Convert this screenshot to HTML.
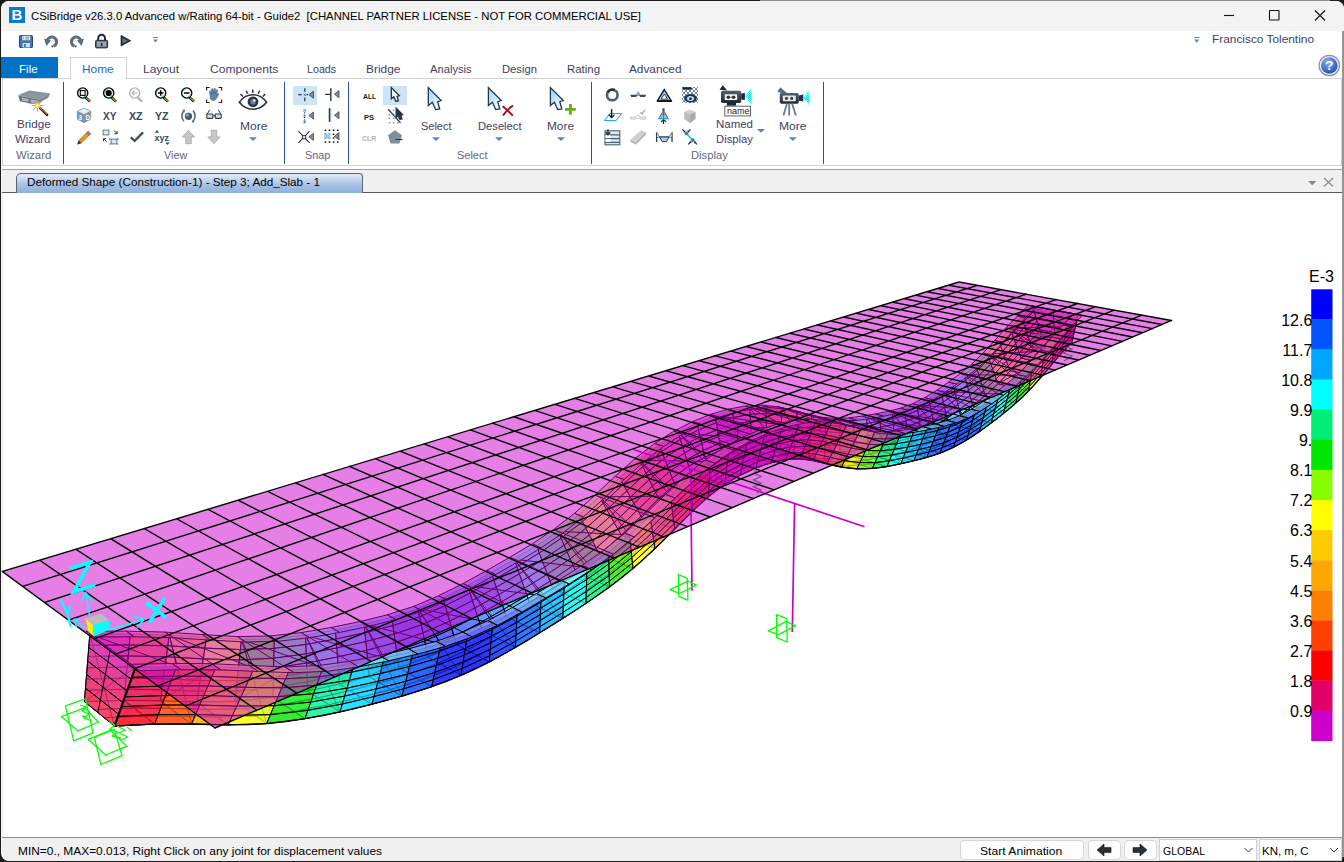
<!DOCTYPE html>
<html><head><meta charset="utf-8"><title>CSiBridge</title><style>
html,body{margin:0;padding:0;width:1344px;height:862px;overflow:hidden;background:#fff;font-family:"Liberation Sans", sans-serif;}
.t{position:absolute;white-space:pre;line-height:1;transform-origin:0 0;font-family:"Liberation Sans", sans-serif;}
.a{position:absolute;}
</style></head>
<body>
<div class="a" style="left:0px;top:0px;width:1344px;height:862px;background:#1b1b1b;"></div>
<div class="a" style="left:760px;top:0px;width:570px;height:1px;background:#8e8e8e;"></div>
<div class="a" style="left:1.4px;top:1px;width:1342.6px;height:860px;background:#fff;border-radius:8px;overflow:hidden;"></div>
<div class="a" style="left:1.4px;top:1px;width:1342.6px;height:30px;background:#f3f3f3;border-radius:8px 8px 0 0;"></div>
<div class="a" style="left:1342px;top:31px;width:2px;height:826px;background:#959595;"></div>
<div class="a" style="left:9px;top:7px;width:16px;height:16px;background:#0b78d4;color:#fff;font:bold 15px/16px 'Liberation Sans',sans-serif;text-align:center;">B</div>
<svg class="a" style="left:1210px;top:1px" width="130" height="30" viewBox="0 0 130 30"><g stroke="#111" stroke-width="1.1" fill="none"><path d="M14 14.5h10"/><rect x="59.5" y="9.5" width="9.5" height="9.5" rx="0.4"/><path d="M105 9.5l10 10M115 9.5l-10 10"/></g></svg>
<div class="a" style="left:1.4px;top:57.4px;width:56.6px;height:20.6px;background:#0072c6;"></div>
<div class="a" style="left:1.8px;top:78px;width:1340.4px;height:88px;background:#fff;box-sizing:border-box;border:1px solid #d2d2d2;"></div>
<div class="a" style="left:70px;top:57px;width:57px;height:22px;background:#fff;box-sizing:border-box;border:1px solid #cfcfcf;border-bottom:none;"></div>
<div class="a" style="left:63px;top:82px;width:1.4px;height:82px;background:#2c4f9e;"></div>
<div class="a" style="left:283.6px;top:82px;width:1.4px;height:82px;background:#2c4f9e;"></div>
<div class="a" style="left:348.1px;top:82px;width:1.4px;height:82px;background:#2c4f9e;"></div>
<div class="a" style="left:590.6px;top:82px;width:1.4px;height:82px;background:#2c4f9e;"></div>
<div class="a" style="left:823.1px;top:82px;width:1.4px;height:82px;background:#2c4f9e;"></div>
<div class="a" style="left:293.4px;top:85.6px;width:23.8px;height:19.8px;background:#cce4f7;"></div>
<div class="a" style="left:383.3px;top:85.6px;width:24px;height:19.8px;background:#cce4f7;"></div>
<div class="a" style="left:2px;top:169px;width:1340px;height:1px;background:#a0a0a0;"></div>
<div class="a" style="left:2px;top:170px;width:1340px;height:22px;background:#f0f0f0;"></div>
<div class="a" style="left:2px;top:192px;width:1340px;height:1px;background:#5a5a5a;"></div>
<div class="a" style="left:16px;top:173px;width:347px;height:20px;box-sizing:border-box;border:1px solid #5c6470;border-bottom:none;border-radius:5px 4px 0 0;background:linear-gradient(#e4edf8 0%,#c2d5ee 30%,#a4c0e4 60%,#8fb1dc 100%);"></div>
<svg class="a" style="left:1300px;top:172px" width="40" height="20" viewBox="0 0 40 20"><path d="M8 9h8.4l-4.2 4.2z" fill="#8a8a8a"/><path d="M24 6l9 8.5M33 6l-9 8.5" stroke="#8a8a8a" stroke-width="1.2" fill="none"/></svg>
<div class="a" style="left:2px;top:193px;width:1px;height:644px;background:#e8e8e8;"></div>
<div class="a" style="left:2px;top:837px;width:1340px;height:1px;background:#8c8c8c;"></div>
<div class="a" style="left:2px;top:838px;width:1340px;height:23px;background:#f0f0f0;border-radius:0 0 8px 8px;"></div>
<div class="a" style="left:959.5px;top:840px;width:124.5px;height:20px;background:#fdfdfd;box-sizing:border-box;border:1px solid #d6d6d6;border-radius:4px;"></div>
<div class="a" style="left:1087.5px;top:840px;width:33.5px;height:20px;background:#fdfdfd;box-sizing:border-box;border:1px solid #d6d6d6;border-radius:4px;"></div>
<div class="a" style="left:1123.5px;top:840px;width:33.5px;height:20px;background:#fdfdfd;box-sizing:border-box;border:1px solid #d6d6d6;border-radius:4px;"></div>
<div class="a" style="left:1158.5px;top:839px;width:98.5px;height:22px;background:#fff;box-sizing:border-box;border:1px solid #d0d0d0;"></div>
<div class="a" style="left:1258.5px;top:839px;width:83px;height:22px;background:#fff;box-sizing:border-box;border:1px solid #d0d0d0;"></div>
<svg class="a" style="left:1087px;top:840px" width="260" height="20" viewBox="0 0 260 20"><path d="M10 10l7-6v3.6h7v4.8h-7v3.6z" fill="#2a3038" stroke="#111" stroke-width=".6"/><path d="M60 10l-7-6v3.6h-7v4.8h7v3.6z" fill="#2a3038" stroke="#111" stroke-width=".6"/><path d="M157.5 8l4 4 4-4M243 8l4 4 4-4" stroke="#444" stroke-width="1" fill="none"/></svg>
<svg class="a" style="left:0;top:193px" width="1344" height="644" viewBox="0 193 1344 644">
<g stroke="#000" stroke-width="1.0" stroke-linejoin="round" fill-opacity="0.74">
<path d="M89.8 634.0L130.3 633.9L129.3 645.0L88.9 645.3Z" fill="#e82e80"/><path d="M88.9 645.3L129.3 645.0L128.3 656.0L88.0 656.5Z" fill="#e82e7f"/><path d="M88.0 656.5L128.3 656.0L127.2 667.1L87.1 667.8Z" fill="#ea2e79"/><path d="M87.1 667.8L127.2 667.1L126.2 678.1L86.2 679.1Z" fill="#ee2e6b"/><path d="M86.2 679.1L126.2 678.1L125.2 689.2L85.3 690.4Z" fill="#f42e56"/><path d="M85.3 690.4L125.2 689.2L124.1 700.3L84.4 701.6Z" fill="#fa2e3f"/><path d="M130.3 633.9L169.3 634.9L167.9 645.8L129.3 645.0Z" fill="#ff542e"/><path d="M129.3 645.0L167.9 645.8L166.4 656.8L128.3 656.0Z" fill="#ff552e"/><path d="M128.3 656.0L166.4 656.8L164.9 667.8L127.2 667.1Z" fill="#ff572e"/><path d="M127.2 667.1L164.9 667.8L163.4 678.8L126.2 678.1Z" fill="#ff5b2e"/><path d="M126.2 678.1L163.4 678.8L162.0 689.8L125.2 689.2Z" fill="#ff5f2e"/><path d="M125.2 689.2L162.0 689.8L160.5 700.8L124.1 700.3Z" fill="#ff622e"/><path d="M169.3 634.9L206.5 637.3L204.9 648.1L167.9 645.8Z" fill="#ffa72e"/><path d="M167.9 645.8L204.9 648.1L203.3 658.9L166.4 656.8Z" fill="#ffa82e"/><path d="M166.4 656.8L203.3 658.9L201.7 669.7L164.9 667.8Z" fill="#ffa92e"/><path d="M164.9 667.8L201.7 669.7L200.1 680.5L163.4 678.8Z" fill="#ffac2e"/><path d="M163.4 678.8L200.1 680.5L198.5 691.3L162.0 689.8Z" fill="#ffaf2e"/><path d="M162.0 689.8L198.5 691.3L196.9 702.1L160.5 700.8Z" fill="#ffb32e"/><path d="M206.5 637.3L241.5 639.3L240.4 649.6L204.9 648.1Z" fill="#fffa2e"/><path d="M204.9 648.1L240.4 649.6L239.3 660.0L203.3 658.9Z" fill="#fffa2e"/><path d="M203.3 658.9L239.3 660.0L238.2 670.3L201.7 669.7Z" fill="#fffb2e"/><path d="M201.7 669.7L238.2 670.3L237.1 680.7L200.1 680.5Z" fill="#fffc2e"/><path d="M200.1 680.5L237.1 680.7L236.0 691.1L198.5 691.3Z" fill="#fffe2e"/><path d="M198.5 691.3L236.0 691.1L235.0 701.4L196.9 702.1Z" fill="#ffff2e"/><path d="M241.5 639.3L274.3 638.6L274.1 648.4L240.4 649.6Z" fill="#3ded2e"/><path d="M240.4 649.6L274.1 648.4L273.8 658.2L239.3 660.0Z" fill="#3ced2e"/><path d="M239.3 660.0L273.8 658.2L273.6 668.0L238.2 670.3Z" fill="#3bed2e"/><path d="M238.2 670.3L273.6 668.0L273.4 677.7L237.1 680.7Z" fill="#39ed2e"/><path d="M237.1 680.7L273.4 677.7L273.2 687.5L236.0 691.1Z" fill="#36ec2e"/><path d="M236.0 691.1L273.2 687.5L273.0 697.3L235.0 701.4Z" fill="#33ec2e"/><path d="M274.3 638.6L305.5 635.1L305.9 644.5L274.1 648.4Z" fill="#2ef4a6"/><path d="M274.1 648.4L305.9 644.5L306.2 653.8L273.8 658.2Z" fill="#2ef4a6"/><path d="M273.8 658.2L306.2 653.8L306.6 663.1L273.6 668.0Z" fill="#2ef4a7"/><path d="M273.6 668.0L306.6 663.1L307.0 672.5L273.4 677.7Z" fill="#2ef4a8"/><path d="M273.4 677.7L307.0 672.5L307.4 681.8L273.2 687.5Z" fill="#2ef4aa"/><path d="M273.2 687.5L307.4 681.8L307.8 691.1L273.0 697.3Z" fill="#2ef5ac"/><path d="M305.5 635.1L335.4 629.9L336.1 639.0L305.9 644.5Z" fill="#2ee2ff"/><path d="M305.9 644.5L336.1 639.0L336.8 648.0L306.2 653.8Z" fill="#2ee2ff"/><path d="M306.2 653.8L336.8 648.0L337.5 657.0L306.6 663.1Z" fill="#2ee1ff"/><path d="M306.6 663.1L337.5 657.0L338.1 666.0L307.0 672.5Z" fill="#2ee1ff"/><path d="M307.0 672.5L338.1 666.0L338.8 675.0L307.4 681.8Z" fill="#2ee0ff"/><path d="M307.4 681.8L338.8 675.0L339.5 684.0L307.8 691.1Z" fill="#2edfff"/><path d="M335.4 629.9L364.2 624.0L365.0 632.8L336.1 639.0Z" fill="#2ea1ff"/><path d="M336.1 639.0L365.0 632.8L365.9 641.6L336.8 648.0Z" fill="#2ea1ff"/><path d="M336.8 648.0L365.9 641.6L366.8 650.3L337.5 657.0Z" fill="#2ea1ff"/><path d="M337.5 657.0L366.8 650.3L367.6 659.1L338.1 666.0Z" fill="#2ea0ff"/><path d="M338.1 666.0L367.6 659.1L368.5 667.8L338.8 675.0Z" fill="#2ea0ff"/><path d="M338.8 675.0L368.5 667.8L369.3 676.6L339.5 684.0Z" fill="#2e9fff"/><path d="M364.2 624.0L391.7 617.2L392.9 625.6L365.0 632.8Z" fill="#2e6eff"/><path d="M365.0 632.8L392.9 625.6L394.1 634.1L365.9 641.6Z" fill="#2e6eff"/><path d="M365.9 641.6L394.1 634.1L395.3 642.6L366.8 650.3Z" fill="#2e6eff"/><path d="M366.8 650.3L395.3 642.6L396.5 651.0L367.6 659.1Z" fill="#2e6eff"/><path d="M367.6 659.1L396.5 651.0L397.7 659.4L368.5 667.8Z" fill="#2e6eff"/><path d="M368.5 667.8L397.7 659.4L398.9 667.8L369.3 676.6Z" fill="#2e6eff"/><path d="M391.7 617.2L417.9 608.6L419.6 616.8L392.9 625.6Z" fill="#2e3eff"/><path d="M392.9 625.6L419.6 616.8L421.3 624.9L394.1 634.1Z" fill="#2e3eff"/><path d="M394.1 634.1L421.3 624.9L423.0 632.9L395.3 642.6Z" fill="#2e3eff"/><path d="M395.3 642.6L423.0 632.9L424.8 641.0L396.5 651.0Z" fill="#2e3eff"/><path d="M396.5 651.0L424.8 641.0L426.5 649.0L397.7 659.4Z" fill="#2e3eff"/><path d="M397.7 659.4L426.5 649.0L428.1 657.1L398.9 667.8Z" fill="#2e3dff"/><path d="M417.9 608.6L443.1 597.9L445.3 605.7L419.6 616.8Z" fill="#2e34ff"/><path d="M419.6 616.8L445.3 605.7L447.5 613.5L421.3 624.9Z" fill="#2e34ff"/><path d="M421.3 624.9L447.5 613.5L449.7 621.2L423.0 632.9Z" fill="#2e34ff"/><path d="M423.0 632.9L449.7 621.2L451.9 628.9L424.8 641.0Z" fill="#2e34ff"/><path d="M424.8 641.0L451.9 628.9L454.1 636.6L426.5 649.0Z" fill="#2e34ff"/><path d="M426.5 649.0L454.1 636.6L456.3 644.2L428.1 657.1Z" fill="#2e34ff"/><path d="M443.1 597.9L467.5 585.6L470.0 593.1L445.3 605.7Z" fill="#2e52ff"/><path d="M445.3 605.7L470.0 593.1L472.5 600.6L447.5 613.5Z" fill="#2e52ff"/><path d="M447.5 613.5L472.5 600.6L474.9 608.1L449.7 621.2Z" fill="#2e52ff"/><path d="M449.7 621.2L474.9 608.1L477.4 615.6L451.9 628.9Z" fill="#2e52ff"/><path d="M451.9 628.9L477.4 615.6L479.8 623.0L454.1 636.6Z" fill="#2e52ff"/><path d="M454.1 636.6L479.8 623.0L482.3 630.4L456.3 644.2Z" fill="#2e52ff"/><path d="M467.5 585.6L491.2 572.4L493.8 579.8L470.0 593.1Z" fill="#2e79ff"/><path d="M470.0 593.1L493.8 579.8L496.3 587.2L472.5 600.6Z" fill="#2e79ff"/><path d="M472.5 600.6L496.3 587.2L498.9 594.6L474.9 608.1Z" fill="#2e79ff"/><path d="M474.9 608.1L498.9 594.6L501.4 601.9L477.4 615.6Z" fill="#2e79ff"/><path d="M477.4 615.6L501.4 601.9L503.9 609.2L479.8 623.0Z" fill="#2e79ff"/><path d="M479.8 623.0L503.9 609.2L506.4 616.4L482.3 630.4Z" fill="#2e79ff"/><path d="M491.2 572.4L514.3 559.3L516.9 566.6L493.8 579.8Z" fill="#2eb6ff"/><path d="M493.8 579.8L516.9 566.6L519.4 573.8L496.3 587.2Z" fill="#2eb6ff"/><path d="M496.3 587.2L519.4 573.8L521.9 581.1L498.9 594.6Z" fill="#2eb6ff"/><path d="M498.9 594.6L521.9 581.1L524.5 588.3L501.4 601.9Z" fill="#2eb6ff"/><path d="M501.4 601.9L524.5 588.3L527.0 595.5L503.9 609.2Z" fill="#2eb6ff"/><path d="M503.9 609.2L527.0 595.5L529.5 602.6L506.4 616.4Z" fill="#2eb6ff"/><path d="M514.3 559.3L536.6 545.8L539.3 553.0L516.9 566.6Z" fill="#2efbff"/><path d="M516.9 566.6L539.3 553.0L542.0 560.1L519.4 573.8Z" fill="#2efbff"/><path d="M519.4 573.8L542.0 560.1L544.7 567.1L521.9 581.1Z" fill="#2efaff"/><path d="M521.9 581.1L544.7 567.1L547.4 574.2L524.5 588.3Z" fill="#2efaff"/><path d="M524.5 588.3L547.4 574.2L550.0 581.2L527.0 595.5Z" fill="#2efaff"/><path d="M527.0 595.5L550.0 581.2L552.7 588.1L529.5 602.6Z" fill="#2efaff"/><path d="M536.6 545.8L558.2 531.3L561.2 538.3L539.3 553.0Z" fill="#2ef191"/><path d="M539.3 553.0L561.2 538.3L564.2 545.1L542.0 560.1Z" fill="#2ef191"/><path d="M542.0 560.1L564.2 545.1L567.2 552.0L544.7 567.1Z" fill="#2ef191"/><path d="M544.7 567.1L567.2 552.0L570.2 558.8L547.4 574.2Z" fill="#2ef191"/><path d="M547.4 574.2L570.2 558.8L573.1 565.6L550.0 581.2Z" fill="#2ef191"/><path d="M550.0 581.2L573.1 565.6L576.1 572.3L552.7 588.1Z" fill="#2ef192"/><path d="M558.2 531.3L579.0 515.0L582.5 521.7L561.2 538.3Z" fill="#54f22e"/><path d="M561.2 538.3L582.5 521.7L585.9 528.3L564.2 545.1Z" fill="#54f12e"/><path d="M564.2 545.1L585.9 528.3L589.4 534.9L567.2 552.0Z" fill="#52f12e"/><path d="M567.2 552.0L589.4 534.9L592.8 541.4L570.2 558.8Z" fill="#50f12e"/><path d="M570.2 558.8L592.8 541.4L596.2 548.0L573.1 565.6Z" fill="#4df02e"/><path d="M573.1 565.6L596.2 548.0L599.5 554.4L576.1 572.3Z" fill="#49f02e"/><path d="M579.0 515.0L599.5 496.8L603.2 503.3L582.5 521.7Z" fill="#fff62e"/><path d="M582.5 521.7L603.2 503.3L606.9 509.7L585.9 528.3Z" fill="#fff72e"/><path d="M585.9 528.3L606.9 509.7L610.5 516.1L589.4 534.9Z" fill="#fff72e"/><path d="M589.4 534.9L610.5 516.1L614.2 522.5L592.8 541.4Z" fill="#fff92e"/><path d="M592.8 541.4L614.2 522.5L617.8 528.9L596.2 548.0Z" fill="#fffa2e"/><path d="M596.2 548.0L617.8 528.9L621.4 535.2L599.5 554.4Z" fill="#fffc2e"/><path d="M599.5 496.8L619.6 477.9L623.2 484.4L603.2 503.3Z" fill="#ffab2e"/><path d="M603.2 503.3L623.2 484.4L626.9 490.8L606.9 509.7Z" fill="#ffab2e"/><path d="M606.9 509.7L626.9 490.8L630.5 497.2L610.5 516.1Z" fill="#ffac2e"/><path d="M610.5 516.1L630.5 497.2L634.0 503.6L614.2 522.5Z" fill="#ffae2e"/><path d="M614.2 522.5L634.0 503.6L637.6 509.9L617.8 528.9Z" fill="#ffb02e"/><path d="M617.8 528.9L637.6 509.9L641.1 516.2L621.4 535.2Z" fill="#ffb22e"/><path d="M619.6 477.9L639.5 460.1L642.8 466.7L623.2 484.4Z" fill="#ff602e"/><path d="M623.2 484.4L642.8 466.7L646.0 473.2L626.9 490.8Z" fill="#ff602e"/><path d="M626.9 490.8L646.0 473.2L649.2 479.7L630.5 497.2Z" fill="#ff612e"/><path d="M630.5 497.2L649.2 479.7L652.4 486.1L634.0 503.6Z" fill="#ff622e"/><path d="M634.0 503.6L652.4 486.1L655.6 492.6L637.6 509.9Z" fill="#ff622e"/><path d="M637.6 509.9L655.6 492.6L658.8 498.9L641.1 516.2Z" fill="#ff632e"/><path d="M639.5 460.1L659.2 444.8L661.8 451.5L642.8 466.7Z" fill="#f82e48"/><path d="M642.8 466.7L661.8 451.5L664.5 458.2L646.0 473.2Z" fill="#f82e47"/><path d="M646.0 473.2L664.5 458.2L667.1 464.9L649.2 479.7Z" fill="#f82e45"/><path d="M649.2 479.7L667.1 464.9L669.7 471.5L652.4 486.1Z" fill="#fa2e41"/><path d="M652.4 486.1L669.7 471.5L672.3 478.1L655.6 492.6Z" fill="#fb2e3c"/><path d="M655.6 492.6L672.3 478.1L674.9 484.6L658.8 498.9Z" fill="#fd2e37"/><path d="M659.2 444.8L678.3 432.6L680.4 439.4L661.8 451.5Z" fill="#e62e86"/><path d="M661.8 451.5L680.4 439.4L682.5 446.2L664.5 458.2Z" fill="#e62e86"/><path d="M664.5 458.2L682.5 446.2L684.6 452.9L667.1 464.9Z" fill="#e72e85"/><path d="M667.1 464.9L684.6 452.9L686.7 459.7L669.7 471.5Z" fill="#e72e84"/><path d="M669.7 471.5L686.7 459.7L688.7 466.4L672.3 478.1Z" fill="#e72e82"/><path d="M672.3 478.1L688.7 466.4L690.8 473.1L674.9 484.6Z" fill="#e72e82"/><path d="M678.3 432.6L696.9 423.0L698.6 429.9L680.4 439.4Z" fill="#dd2eaf"/><path d="M680.4 439.4L698.6 429.9L700.2 436.8L682.5 446.2Z" fill="#de2eae"/><path d="M682.5 446.2L700.2 436.8L701.8 443.6L684.6 452.9Z" fill="#de2ead"/><path d="M684.6 452.9L701.8 443.6L703.4 450.4L686.7 459.7Z" fill="#de2eab"/><path d="M686.7 459.7L703.4 450.4L705.0 457.2L688.7 466.4Z" fill="#df2ea8"/><path d="M688.7 466.4L705.0 457.2L706.6 464.0L690.8 473.1Z" fill="#e02ea5"/><path d="M696.9 423.0L715.0 415.7L716.3 422.7L698.6 429.9Z" fill="#da2ebf"/><path d="M698.6 429.9L716.3 422.7L717.5 429.6L700.2 436.8Z" fill="#da2ebe"/><path d="M700.2 436.8L717.5 429.6L718.7 436.5L701.8 443.6Z" fill="#da2ebe"/><path d="M701.8 443.6L718.7 436.5L719.9 443.4L703.4 450.4Z" fill="#da2ebd"/><path d="M703.4 450.4L719.9 443.4L721.2 450.2L705.0 457.2Z" fill="#db2ebc"/><path d="M705.0 457.2L721.2 450.2L722.4 457.1L706.6 464.0Z" fill="#db2ebb"/><path d="M715.0 415.7L732.6 410.5L733.4 417.5L716.3 422.7Z" fill="#da2ebf"/><path d="M716.3 422.7L733.4 417.5L734.3 424.4L717.5 429.6Z" fill="#da2ebe"/><path d="M717.5 429.6L734.3 424.4L735.2 431.3L718.7 436.5Z" fill="#da2ebe"/><path d="M718.7 436.5L735.2 431.3L736.0 438.3L719.9 443.4Z" fill="#da2ebd"/><path d="M719.9 443.4L736.0 438.3L736.9 445.2L721.2 450.2Z" fill="#db2ebc"/><path d="M721.2 450.2L736.9 445.2L737.7 452.1L722.4 457.1Z" fill="#db2ebc"/><path d="M732.6 410.5L749.6 407.4L750.1 414.3L733.4 417.5Z" fill="#dd2eb0"/><path d="M733.4 417.5L750.1 414.3L750.6 421.3L734.3 424.4Z" fill="#dd2eaf"/><path d="M734.3 424.4L750.6 421.3L751.0 428.3L735.2 431.3Z" fill="#de2eae"/><path d="M735.2 431.3L751.0 428.3L751.5 435.3L736.0 438.3Z" fill="#de2eac"/><path d="M736.0 438.3L751.5 435.3L752.0 442.2L736.9 445.2Z" fill="#df2ea9"/><path d="M736.9 445.2L752.0 442.2L752.4 449.2L737.7 452.1Z" fill="#df2ea6"/><path d="M749.6 407.4L766.1 406.5L766.2 413.5L750.1 414.3Z" fill="#e62e87"/><path d="M750.1 414.3L766.2 413.5L766.2 420.5L750.6 421.3Z" fill="#e62e87"/><path d="M750.6 421.3L766.2 420.5L766.3 427.5L751.0 428.3Z" fill="#e62e86"/><path d="M751.0 428.3L766.3 427.5L766.3 434.6L751.5 435.3Z" fill="#e72e85"/><path d="M751.5 435.3L766.3 434.6L766.4 441.6L752.0 442.2Z" fill="#e72e83"/><path d="M752.0 442.2L766.4 441.6L766.5 448.6L752.4 449.2Z" fill="#e72e82"/><path d="M766.1 406.5L782.1 408.0L781.7 415.0L766.2 413.5Z" fill="#f62e4e"/><path d="M766.2 413.5L781.7 415.0L781.4 422.1L766.2 420.5Z" fill="#f62e4d"/><path d="M766.2 420.5L781.4 422.1L781.0 429.2L766.3 427.5Z" fill="#f72e4b"/><path d="M766.3 427.5L781.0 429.2L780.6 436.3L766.3 434.6Z" fill="#f82e47"/><path d="M766.3 434.6L780.6 436.3L780.3 443.4L766.4 441.6Z" fill="#f92e42"/><path d="M766.4 441.6L780.3 443.4L779.9 450.4L766.5 448.6Z" fill="#fb2e3c"/><path d="M782.1 408.0L797.4 411.4L796.8 418.4L781.7 415.0Z" fill="#ff5b2e"/><path d="M781.7 415.0L796.8 418.4L796.2 425.5L781.4 422.1Z" fill="#ff5c2e"/><path d="M781.4 422.1L796.2 425.5L795.6 432.5L781.0 429.2Z" fill="#ff5d2e"/><path d="M781.0 429.2L795.6 432.5L795.1 439.6L780.6 436.3Z" fill="#ff5e2e"/><path d="M780.6 436.3L795.1 439.6L794.5 446.7L780.3 443.4Z" fill="#ff602e"/><path d="M780.3 443.4L794.5 446.7L793.9 453.7L779.9 450.4Z" fill="#ff622e"/><path d="M797.4 411.4L812.0 415.3L811.5 422.3L796.8 418.4Z" fill="#ffa12e"/><path d="M796.8 418.4L811.5 422.3L810.9 429.2L796.2 425.5Z" fill="#ffa22e"/><path d="M796.2 425.5L810.9 429.2L810.4 436.2L795.6 432.5Z" fill="#ffa32e"/><path d="M795.6 432.5L810.4 436.2L809.8 443.1L795.1 439.6Z" fill="#ffa42e"/><path d="M795.1 439.6L809.8 443.1L809.3 450.0L794.5 446.7Z" fill="#ffa72e"/><path d="M794.5 446.7L809.3 450.0L808.7 457.0L793.9 453.7Z" fill="#ffaa2e"/><path d="M812.0 415.3L826.1 418.5L825.8 425.2L811.5 422.3Z" fill="#ffe62e"/><path d="M811.5 422.3L825.8 425.2L825.5 432.0L810.9 429.2Z" fill="#ffe62e"/><path d="M810.9 429.2L825.5 432.0L825.2 438.7L810.4 436.2Z" fill="#ffe72e"/><path d="M810.4 436.2L825.2 438.7L824.9 445.5L809.8 443.1Z" fill="#ffe82e"/><path d="M809.8 443.1L824.9 445.5L824.6 452.2L809.3 450.0Z" fill="#ffeb2e"/><path d="M809.3 450.0L824.6 452.2L824.3 458.9L808.7 457.0Z" fill="#ffee2e"/><path d="M826.1 418.5L839.8 419.7L839.8 426.2L825.8 425.2Z" fill="#8cfc2e"/><path d="M825.8 425.2L839.8 426.2L839.9 432.7L825.5 432.0Z" fill="#8bfc2e"/><path d="M825.5 432.0L839.9 432.7L839.9 439.2L825.2 438.7Z" fill="#8afb2e"/><path d="M825.2 438.7L839.9 439.2L840.0 445.7L824.9 445.5Z" fill="#88fb2e"/><path d="M824.9 445.5L840.0 445.7L840.0 452.2L824.6 452.2Z" fill="#86fb2e"/><path d="M824.6 452.2L840.0 452.2L840.1 458.7L824.3 458.9Z" fill="#82fa2e"/><path d="M839.8 419.7L853.3 419.1L853.6 425.4L839.8 426.2Z" fill="#2eef75"/><path d="M839.8 426.2L853.6 425.4L853.9 431.7L839.9 432.7Z" fill="#2eef75"/><path d="M839.9 432.7L853.9 431.7L854.1 438.0L839.9 439.2Z" fill="#2eef75"/><path d="M839.9 439.2L854.1 438.0L854.4 444.4L840.0 445.7Z" fill="#2eef76"/><path d="M840.0 445.7L854.4 444.4L854.7 450.7L840.0 452.2Z" fill="#2eef77"/><path d="M840.0 452.2L854.7 450.7L855.0 457.0L840.1 458.7Z" fill="#2ef079"/><path d="M853.3 419.1L866.6 417.3L867.0 423.5L853.6 425.4Z" fill="#2efce8"/><path d="M853.6 425.4L867.0 423.5L867.4 429.7L853.9 431.7Z" fill="#2efce8"/><path d="M853.9 431.7L867.4 429.7L867.8 435.9L854.1 438.0Z" fill="#2efce9"/><path d="M854.1 438.0L867.8 435.9L868.2 442.0L854.4 444.4Z" fill="#2efce9"/><path d="M854.4 444.4L868.2 442.0L868.6 448.2L854.7 450.7Z" fill="#2efcea"/><path d="M854.7 450.7L868.6 448.2L869.0 454.4L855.0 457.0Z" fill="#2efceb"/><path d="M866.6 417.3L879.6 415.0L880.0 421.1L867.0 423.5Z" fill="#2ed4ff"/><path d="M867.0 423.5L880.0 421.1L880.5 427.2L867.4 429.7Z" fill="#2ed4ff"/><path d="M867.4 429.7L880.5 427.2L880.9 433.3L867.8 435.9Z" fill="#2ed4ff"/><path d="M867.8 435.9L880.9 433.3L881.3 439.4L868.2 442.0Z" fill="#2ed4ff"/><path d="M868.2 442.0L881.3 439.4L881.8 445.5L868.6 448.2Z" fill="#2ed3ff"/><path d="M868.6 448.2L881.8 445.5L882.2 451.5L869.0 454.4Z" fill="#2ed3ff"/><path d="M879.6 415.0L892.3 412.5L892.8 418.5L880.0 421.1Z" fill="#2ea4ff"/><path d="M880.0 421.1L892.8 418.5L893.3 424.5L880.5 427.2Z" fill="#2ea4ff"/><path d="M880.5 427.2L893.3 424.5L893.8 430.5L880.9 433.3Z" fill="#2ea4ff"/><path d="M880.9 433.3L893.8 430.5L894.3 436.5L881.3 439.4Z" fill="#2ea4ff"/><path d="M881.3 439.4L894.3 436.5L894.8 442.4L881.8 445.5Z" fill="#2ea4ff"/><path d="M881.8 445.5L894.8 442.4L895.3 448.4L882.2 451.5Z" fill="#2ea3ff"/><path d="M892.3 412.5L904.7 409.3L905.4 415.2L892.8 418.5Z" fill="#2e74ff"/><path d="M892.8 418.5L905.4 415.2L906.0 421.0L893.3 424.5Z" fill="#2e74ff"/><path d="M893.3 424.5L906.0 421.0L906.7 426.9L893.8 430.5Z" fill="#2e74ff"/><path d="M893.8 430.5L906.7 426.9L907.3 432.7L894.3 436.5Z" fill="#2e74ff"/><path d="M894.3 436.5L907.3 432.7L908.0 438.5L894.8 442.4Z" fill="#2e74ff"/><path d="M894.8 442.4L908.0 438.5L908.6 444.3L895.3 448.4Z" fill="#2e74ff"/><path d="M904.7 409.3L916.9 404.8L917.8 410.5L905.4 415.2Z" fill="#2e62ff"/><path d="M905.4 415.2L917.8 410.5L918.7 416.2L906.0 421.0Z" fill="#2e62ff"/><path d="M906.0 421.0L918.7 416.2L919.6 421.8L906.7 426.9Z" fill="#2e62ff"/><path d="M906.7 426.9L919.6 421.8L920.4 427.5L907.3 432.7Z" fill="#2e62ff"/><path d="M907.3 432.7L920.4 427.5L921.3 433.1L908.0 438.5Z" fill="#2e62ff"/><path d="M908.0 438.5L921.3 433.1L922.2 438.8L908.6 444.3Z" fill="#2e62ff"/><path d="M916.9 404.8L928.9 398.6L930.1 404.1L917.8 410.5Z" fill="#2e63ff"/><path d="M917.8 410.5L930.1 404.1L931.2 409.7L918.7 416.2Z" fill="#2e63ff"/><path d="M918.7 416.2L931.2 409.7L932.3 415.2L919.6 421.8Z" fill="#2e63ff"/><path d="M919.6 421.8L932.3 415.2L933.4 420.7L920.4 427.5Z" fill="#2e63ff"/><path d="M920.4 427.5L933.4 420.7L934.5 426.2L921.3 433.1Z" fill="#2e63ff"/><path d="M921.3 433.1L934.5 426.2L935.6 431.6L922.2 438.8Z" fill="#2e63ff"/><path d="M928.9 398.6L940.9 391.2L942.2 396.6L930.1 404.1Z" fill="#2e79ff"/><path d="M930.1 404.1L942.2 396.6L943.4 402.0L931.2 409.7Z" fill="#2e79ff"/><path d="M931.2 409.7L943.4 402.0L944.6 407.4L932.3 415.2Z" fill="#2e79ff"/><path d="M932.3 415.2L944.6 407.4L945.9 412.8L933.4 420.7Z" fill="#2e79ff"/><path d="M933.4 420.7L945.9 412.8L947.1 418.2L934.5 426.2Z" fill="#2e79ff"/><path d="M934.5 426.2L947.1 418.2L948.3 423.5L935.6 431.6Z" fill="#2e79ff"/><path d="M940.9 391.2L952.7 383.1L954.0 388.4L942.2 396.6Z" fill="#2eb5ff"/><path d="M942.2 396.6L954.0 388.4L955.3 393.8L943.4 402.0Z" fill="#2eb5ff"/><path d="M943.4 402.0L955.3 393.8L956.6 399.1L944.6 407.4Z" fill="#2eb5ff"/><path d="M944.6 407.4L956.6 399.1L957.9 404.4L945.9 412.8Z" fill="#2eb5ff"/><path d="M945.9 412.8L957.9 404.4L959.2 409.7L947.1 418.2Z" fill="#2eb5ff"/><path d="M947.1 418.2L959.2 409.7L960.5 415.0L948.3 423.5Z" fill="#2eb5ff"/><path d="M952.7 383.1L964.4 374.6L965.8 379.8L954.0 388.4Z" fill="#2ef9ff"/><path d="M954.0 388.4L965.8 379.8L967.2 385.1L955.3 393.8Z" fill="#2ef9ff"/><path d="M955.3 393.8L967.2 385.1L968.6 390.3L956.6 399.1Z" fill="#2ef8ff"/><path d="M956.6 399.1L968.6 390.3L969.9 395.5L957.9 404.4Z" fill="#2ef8ff"/><path d="M957.9 404.4L969.9 395.5L971.3 400.7L959.2 409.7Z" fill="#2ef8ff"/><path d="M959.2 409.7L971.3 400.7L972.7 405.9L960.5 415.0Z" fill="#2ef7ff"/><path d="M964.4 374.6L975.9 365.1L977.4 370.2L965.8 379.8Z" fill="#2ef192"/><path d="M965.8 379.8L977.4 370.2L979.0 375.3L967.2 385.1Z" fill="#2ef192"/><path d="M967.2 385.1L979.0 375.3L980.6 380.5L968.6 390.3Z" fill="#2ef192"/><path d="M968.6 390.3L980.6 380.5L982.1 385.6L969.9 395.5Z" fill="#2ef193"/><path d="M969.9 395.5L982.1 385.6L983.7 390.6L971.3 400.7Z" fill="#2ef294"/><path d="M971.3 400.7L983.7 390.6L985.2 395.7L972.7 405.9Z" fill="#2ef295"/><path d="M975.9 365.1L987.3 354.0L989.1 359.0L977.4 370.2Z" fill="#4ef02e"/><path d="M977.4 370.2L989.1 359.0L990.9 364.0L979.0 375.3Z" fill="#4ef02e"/><path d="M979.0 375.3L990.9 364.0L992.7 369.0L980.6 380.5Z" fill="#4cf02e"/><path d="M980.6 380.5L992.7 369.0L994.5 373.9L982.1 385.6Z" fill="#4af02e"/><path d="M982.1 385.6L994.5 373.9L996.3 378.9L983.7 390.6Z" fill="#46ef2e"/><path d="M983.7 390.6L996.3 378.9L998.1 383.8L985.2 395.7Z" fill="#42ee2e"/><path d="M987.3 354.0L998.8 341.4L1000.7 346.3L989.1 359.0Z" fill="#fff82e"/><path d="M989.1 359.0L1000.7 346.3L1002.6 351.3L990.9 364.0Z" fill="#fff82e"/><path d="M990.9 364.0L1002.6 351.3L1004.5 356.2L992.7 369.0Z" fill="#fff92e"/><path d="M992.7 369.0L1004.5 356.2L1006.4 361.1L994.5 373.9Z" fill="#fffa2e"/><path d="M994.5 373.9L1006.4 361.1L1008.3 365.9L996.3 378.9Z" fill="#fffc2e"/><path d="M996.3 378.9L1008.3 365.9L1010.2 370.8L998.1 383.8Z" fill="#fffe2e"/><path d="M998.8 341.4L1010.2 328.6L1012.0 333.6L1000.7 346.3Z" fill="#ffaa2e"/><path d="M1000.7 346.3L1012.0 333.6L1013.9 338.5L1002.6 351.3Z" fill="#ffaa2e"/><path d="M1002.6 351.3L1013.9 338.5L1015.7 343.5L1004.5 356.2Z" fill="#ffac2e"/><path d="M1004.5 356.2L1015.7 343.5L1017.5 348.4L1006.4 361.1Z" fill="#ffae2e"/><path d="M1006.4 361.1L1017.5 348.4L1019.3 353.2L1008.3 365.9Z" fill="#ffb12e"/><path d="M1008.3 365.9L1019.3 353.2L1021.1 358.1L1010.2 370.8Z" fill="#ffb42e"/><path d="M1010.2 328.6L1021.4 316.9L1023.1 321.9L1012.0 333.6Z" fill="#ff5c2e"/><path d="M1012.0 333.6L1023.1 321.9L1024.8 326.9L1013.9 338.5Z" fill="#ff5c2e"/><path d="M1013.9 338.5L1024.8 326.9L1026.4 331.8L1015.7 343.5Z" fill="#ff5e2e"/><path d="M1015.7 343.5L1026.4 331.8L1028.1 336.8L1017.5 348.4Z" fill="#ff602e"/><path d="M1017.5 348.4L1028.1 336.8L1029.7 341.7L1019.3 353.2Z" fill="#ff622e"/><path d="M1019.3 353.2L1029.7 341.7L1031.3 346.6L1021.1 358.1Z" fill="#ff632e"/><path d="M1021.4 316.9L1032.4 306.1L1034.0 311.1L1023.1 321.9Z" fill="#ec2e71"/><path d="M1023.1 321.9L1034.0 311.1L1035.5 316.0L1024.8 326.9Z" fill="#ec2e6f"/><path d="M1024.8 326.9L1035.5 316.0L1037.1 321.0L1026.4 331.8Z" fill="#ef2e68"/><path d="M1026.4 331.8L1037.1 321.0L1038.7 325.9L1028.1 336.8Z" fill="#f22e5a"/><path d="M1028.1 336.8L1038.7 325.9L1040.2 330.8L1029.7 341.7Z" fill="#f72e49"/><path d="M1029.7 341.7L1040.2 330.8L1041.8 335.7L1031.3 346.6Z" fill="#fc2e38"/>
<path d="M84.4 701.6L124.1 700.3L134.1 708.1L94.2 709.6Z" fill="#fd575d"/><path d="M94.2 709.6L134.1 708.1L144.3 716.0L104.2 717.7Z" fill="#fd575d"/><path d="M104.2 717.7L144.3 716.0L154.7 724.1L114.5 726.1Z" fill="#fd575d"/><path d="M124.1 700.3L160.5 700.8L170.6 708.4L134.1 708.1Z" fill="#ff8157"/><path d="M134.1 708.1L170.6 708.4L181.0 716.1L144.3 716.0Z" fill="#ff8157"/><path d="M144.3 716.0L181.0 716.1L191.5 724.0L154.7 724.1Z" fill="#ff8157"/><path d="M160.5 700.8L196.9 702.1L207.1 709.5L170.6 708.4Z" fill="#ffc357"/><path d="M170.6 708.4L207.1 709.5L217.6 717.1L181.0 716.1Z" fill="#ffc357"/><path d="M181.0 716.1L217.6 717.1L228.2 724.8L191.5 724.0Z" fill="#ffc357"/><path d="M196.9 702.1L235.0 701.4L245.3 708.7L207.1 709.5Z" fill="#ffff57"/><path d="M207.1 709.5L245.3 708.7L255.9 716.0L217.6 717.1Z" fill="#ffff57"/><path d="M217.6 717.1L255.9 716.0L266.7 723.6L228.2 724.8Z" fill="#ffff57"/><path d="M235.0 701.4L273.0 697.3L283.5 704.3L245.3 708.7Z" fill="#5aef57"/><path d="M245.3 708.7L283.5 704.3L294.2 711.4L255.9 716.0Z" fill="#5aef57"/><path d="M255.9 716.0L294.2 711.4L305.0 718.7L266.7 723.6Z" fill="#5aef57"/><path d="M273.0 697.3L307.8 691.1L318.3 697.9L283.5 704.3Z" fill="#57f7bd"/><path d="M283.5 704.3L318.3 697.9L329.1 704.8L294.2 711.4Z" fill="#57f7bd"/><path d="M294.2 711.4L329.1 704.8L340.0 711.9L305.0 718.7Z" fill="#57f7bd"/><path d="M307.8 691.1L339.5 684.0L350.1 690.6L318.3 697.9Z" fill="#57e5ff"/><path d="M318.3 697.9L350.1 690.6L360.9 697.3L329.1 704.8Z" fill="#57e5ff"/><path d="M329.1 704.8L360.9 697.3L372.0 704.2L340.0 711.9Z" fill="#57e5ff"/><path d="M339.5 684.0L369.3 676.6L380.0 683.0L350.1 690.6Z" fill="#57b2ff"/><path d="M350.1 690.6L380.0 683.0L390.9 689.5L360.9 697.3Z" fill="#57b2ff"/><path d="M360.9 697.3L390.9 689.5L402.0 696.1L372.0 704.2Z" fill="#57b2ff"/><path d="M369.3 676.6L398.9 667.8L409.6 674.0L380.0 683.0Z" fill="#578aff"/><path d="M380.0 683.0L409.6 674.0L420.5 680.3L390.9 689.5Z" fill="#578aff"/><path d="M390.9 689.5L420.5 680.3L431.7 686.7L402.0 696.1Z" fill="#578aff"/><path d="M398.9 667.8L428.1 657.1L438.9 663.0L409.6 674.0Z" fill="#5763ff"/><path d="M409.6 674.0L438.9 663.0L449.9 669.1L420.5 680.3Z" fill="#5763ff"/><path d="M420.5 680.3L449.9 669.1L461.1 675.3L431.7 686.7Z" fill="#5763ff"/><path d="M428.1 657.1L456.3 644.2L467.1 650.0L438.9 663.0Z" fill="#575bff"/><path d="M438.9 663.0L467.1 650.0L478.1 655.9L449.9 669.1Z" fill="#575bff"/><path d="M449.9 669.1L478.1 655.9L489.3 661.9L461.1 675.3Z" fill="#575bff"/><path d="M456.3 644.2L482.3 630.4L493.1 636.0L467.1 650.0Z" fill="#5774ff"/><path d="M467.1 650.0L493.1 636.0L504.2 641.6L478.1 655.9Z" fill="#5774ff"/><path d="M478.1 655.9L504.2 641.6L515.4 647.4L489.3 661.9Z" fill="#5774ff"/><path d="M482.3 630.4L506.4 616.4L517.3 621.8L493.1 636.0Z" fill="#5793ff"/><path d="M493.1 636.0L517.3 621.8L528.4 627.2L504.2 641.6Z" fill="#5793ff"/><path d="M504.2 641.6L528.4 627.2L539.7 632.8L515.4 647.4Z" fill="#5793ff"/><path d="M506.4 616.4L529.5 602.6L540.4 607.8L517.3 621.8Z" fill="#57c4ff"/><path d="M517.3 621.8L540.4 607.8L551.5 613.0L528.4 627.2Z" fill="#57c4ff"/><path d="M528.4 627.2L551.5 613.0L562.8 618.4L539.7 632.8Z" fill="#57c4ff"/><path d="M529.5 602.6L552.7 588.1L563.6 593.1L540.4 607.8Z" fill="#57faff"/><path d="M540.4 607.8L563.6 593.1L574.8 598.2L551.5 613.0Z" fill="#57faff"/><path d="M551.5 613.0L574.8 598.2L586.1 603.3L562.8 618.4Z" fill="#57faff"/><path d="M552.7 588.1L576.1 572.3L587.1 577.1L563.6 593.1Z" fill="#57f4a8"/><path d="M563.6 593.1L587.1 577.1L598.2 582.0L574.8 598.2Z" fill="#57f4a8"/><path d="M574.8 598.2L598.2 582.0L609.5 586.9L586.1 603.3Z" fill="#57f4a8"/><path d="M576.1 572.3L599.5 554.4L610.5 559.0L587.1 577.1Z" fill="#6bf257"/><path d="M587.1 577.1L610.5 559.0L621.7 563.7L598.2 582.0Z" fill="#6bf257"/><path d="M598.2 582.0L621.7 563.7L633.0 568.4L609.5 586.9Z" fill="#6bf257"/><path d="M599.5 554.4L621.4 535.2L632.4 539.6L610.5 559.0Z" fill="#fffe57"/><path d="M610.5 559.0L632.4 539.6L643.6 544.0L621.7 563.7Z" fill="#fffe57"/><path d="M621.7 563.7L643.6 544.0L655.0 548.6L633.0 568.4Z" fill="#fffe57"/><path d="M621.4 535.2L641.1 516.2L652.2 520.4L632.4 539.6Z" fill="#ffc257"/><path d="M632.4 539.6L652.2 520.4L663.4 524.7L643.6 544.0Z" fill="#ffc257"/><path d="M643.6 544.0L663.4 524.7L674.8 529.0L655.0 548.6Z" fill="#ffc257"/><path d="M641.1 516.2L658.8 498.9L669.9 503.0L652.2 520.4Z" fill="#ff8257"/><path d="M652.2 520.4L669.9 503.0L681.1 507.1L663.4 524.7Z" fill="#ff8257"/><path d="M663.4 524.7L681.1 507.1L692.5 511.2L674.8 529.0Z" fill="#ff8257"/><path d="M658.8 498.9L674.9 484.6L686.0 488.5L669.9 503.0Z" fill="#fe575c"/><path d="M669.9 503.0L686.0 488.5L697.2 492.4L681.1 507.1Z" fill="#fe575c"/><path d="M681.1 507.1L697.2 492.4L708.7 496.4L692.5 511.2Z" fill="#fe575c"/><path d="M674.9 484.6L690.8 473.1L701.9 476.9L686.0 488.5Z" fill="#ec579a"/><path d="M686.0 488.5L701.9 476.9L713.2 480.7L697.2 492.4Z" fill="#ec579a"/><path d="M697.2 492.4L713.2 480.7L724.6 484.5L708.7 496.4Z" fill="#ec579a"/><path d="M690.8 473.1L706.6 464.0L717.7 467.7L701.9 476.9Z" fill="#e657b5"/><path d="M701.9 476.9L717.7 467.7L729.0 471.4L713.2 480.7Z" fill="#e657b5"/><path d="M713.2 480.7L729.0 471.4L740.4 475.1L724.6 484.5Z" fill="#e657b5"/><path d="M706.6 464.0L722.4 457.1L733.4 460.6L717.7 467.7Z" fill="#e257c8"/><path d="M717.7 467.7L733.4 460.6L744.7 464.3L729.0 471.4Z" fill="#e257c8"/><path d="M729.0 471.4L744.7 464.3L756.0 467.9L740.4 475.1Z" fill="#e257c8"/><path d="M722.4 457.1L737.7 452.1L748.8 455.5L733.4 460.6Z" fill="#e257c8"/><path d="M733.4 460.6L748.8 455.5L760.0 459.1L744.7 464.3Z" fill="#e257c8"/><path d="M744.7 464.3L760.0 459.1L771.3 462.7L756.0 467.9Z" fill="#e257c8"/><path d="M737.7 452.1L752.4 449.2L763.4 452.6L748.8 455.5Z" fill="#e657b6"/><path d="M748.8 455.5L763.4 452.6L774.6 456.1L760.0 459.1Z" fill="#e657b6"/><path d="M760.0 459.1L774.6 456.1L785.9 459.6L771.3 462.7Z" fill="#e657b6"/><path d="M752.4 449.2L766.5 448.6L777.4 452.0L763.4 452.6Z" fill="#ec579a"/><path d="M763.4 452.6L777.4 452.0L788.5 455.4L774.6 456.1Z" fill="#ec579a"/><path d="M774.6 456.1L788.5 455.4L799.8 458.8L785.9 459.6Z" fill="#ec579a"/><path d="M766.5 448.6L779.9 450.4L790.8 453.8L777.4 452.0Z" fill="#fd575f"/><path d="M777.4 452.0L790.8 453.8L801.9 457.2L788.5 455.4Z" fill="#fd575f"/><path d="M788.5 455.4L801.9 457.2L813.1 460.6L799.8 458.8Z" fill="#fd575f"/><path d="M779.9 450.4L793.9 453.7L804.7 457.0L790.8 453.8Z" fill="#ff8157"/><path d="M790.8 453.8L804.7 457.0L815.7 460.4L801.9 457.2Z" fill="#ff8157"/><path d="M801.9 457.2L815.7 460.4L826.9 463.8L813.1 460.6Z" fill="#ff8157"/><path d="M793.9 453.7L808.7 457.0L819.5 460.3L804.7 457.0Z" fill="#ffbc57"/><path d="M804.7 457.0L819.5 460.3L830.4 463.6L815.7 460.4Z" fill="#ffbc57"/><path d="M815.7 460.4L830.4 463.6L841.4 467.0L826.9 463.8Z" fill="#ffbc57"/><path d="M808.7 457.0L824.3 458.9L835.0 462.2L819.5 460.3Z" fill="#fff257"/><path d="M819.5 460.3L835.0 462.2L845.8 465.5L830.4 463.6Z" fill="#fff257"/><path d="M830.4 463.6L845.8 465.5L856.8 468.8L841.4 467.0Z" fill="#fff257"/><path d="M824.3 458.9L840.1 458.7L850.7 461.9L835.0 462.2Z" fill="#99fb57"/><path d="M835.0 462.2L850.7 461.9L861.4 465.1L845.8 465.5Z" fill="#99fb57"/><path d="M845.8 465.5L861.4 465.1L872.3 468.4L856.8 468.8Z" fill="#99fb57"/><path d="M840.1 458.7L855.0 457.0L865.5 460.1L850.7 461.9Z" fill="#57f394"/><path d="M850.7 461.9L865.5 460.1L876.2 463.3L861.4 465.1Z" fill="#57f394"/><path d="M861.4 465.1L876.2 463.3L887.0 466.5L872.3 468.4Z" fill="#57f394"/><path d="M855.0 457.0L869.0 454.4L879.5 457.4L865.5 460.1Z" fill="#57fdef"/><path d="M865.5 460.1L879.5 457.4L890.1 460.5L876.2 463.3Z" fill="#57fdef"/><path d="M876.2 463.3L890.1 460.5L900.9 463.7L887.0 466.5Z" fill="#57fdef"/><path d="M869.0 454.4L882.2 451.5L892.6 454.5L879.5 457.4Z" fill="#57dbff"/><path d="M879.5 457.4L892.6 454.5L903.2 457.6L890.1 460.5Z" fill="#57dbff"/><path d="M890.1 460.5L903.2 457.6L913.9 460.7L900.9 463.7Z" fill="#57dbff"/><path d="M882.2 451.5L895.3 448.4L905.7 451.3L892.6 454.5Z" fill="#57b5ff"/><path d="M892.6 454.5L905.7 451.3L916.2 454.3L903.2 457.6Z" fill="#57b5ff"/><path d="M903.2 457.6L916.2 454.3L926.8 457.4L913.9 460.7Z" fill="#57b5ff"/><path d="M895.3 448.4L908.6 444.3L918.9 447.2L905.7 451.3Z" fill="#578fff"/><path d="M905.7 451.3L918.9 447.2L929.4 450.1L916.2 454.3Z" fill="#578fff"/><path d="M916.2 454.3L929.4 450.1L940.0 453.1L926.8 457.4Z" fill="#578fff"/><path d="M908.6 444.3L922.2 438.8L932.5 441.6L918.9 447.2Z" fill="#5781ff"/><path d="M918.9 447.2L932.5 441.6L942.9 444.4L929.4 450.1Z" fill="#5781ff"/><path d="M929.4 450.1L942.9 444.4L953.4 447.3L940.0 453.1Z" fill="#5781ff"/><path d="M922.2 438.8L935.6 431.6L945.8 434.4L932.5 441.6Z" fill="#5781ff"/><path d="M932.5 441.6L945.8 434.4L956.2 437.2L942.9 444.4Z" fill="#5781ff"/><path d="M942.9 444.4L956.2 437.2L966.7 440.0L953.4 447.3Z" fill="#5781ff"/><path d="M935.6 431.6L948.3 423.5L958.6 426.2L945.8 434.4Z" fill="#5793ff"/><path d="M945.8 434.4L958.6 426.2L968.9 428.9L956.2 437.2Z" fill="#5793ff"/><path d="M956.2 437.2L968.9 428.9L979.3 431.6L966.7 440.0Z" fill="#5793ff"/><path d="M948.3 423.5L960.5 415.0L970.7 417.6L958.6 426.2Z" fill="#57c3ff"/><path d="M958.6 426.2L970.7 417.6L981.0 420.2L968.9 428.9Z" fill="#57c3ff"/><path d="M968.9 428.9L981.0 420.2L991.4 422.8L979.3 431.6Z" fill="#57c3ff"/><path d="M960.5 415.0L972.7 405.9L982.8 408.4L970.7 417.6Z" fill="#57f8ff"/><path d="M970.7 417.6L982.8 408.4L993.1 411.0L981.0 420.2Z" fill="#57f8ff"/><path d="M981.0 420.2L993.1 411.0L1003.4 413.5L991.4 422.8Z" fill="#57f8ff"/><path d="M972.7 405.9L985.2 395.7L995.3 398.1L982.8 408.4Z" fill="#57f4aa"/><path d="M982.8 408.4L995.3 398.1L1005.5 400.6L993.1 411.0Z" fill="#57f4aa"/><path d="M993.1 411.0L1005.5 400.6L1015.9 403.1L1003.4 413.5Z" fill="#57f4aa"/><path d="M985.2 395.7L998.1 383.8L1008.2 386.1L995.3 398.1Z" fill="#65f157"/><path d="M995.3 398.1L1008.2 386.1L1018.3 388.5L1005.5 400.6Z" fill="#65f157"/><path d="M1005.5 400.6L1018.3 388.5L1028.6 390.9L1015.9 403.1Z" fill="#65f157"/><path d="M998.1 383.8L1010.2 370.8L1020.2 373.0L1008.2 386.1Z" fill="#ffff57"/><path d="M1008.2 386.1L1020.2 373.0L1030.4 375.3L1018.3 388.5Z" fill="#ffff57"/><path d="M1018.3 388.5L1030.4 375.3L1040.7 377.6L1028.6 390.9Z" fill="#ffff57"/><path d="M1010.2 370.8L1021.1 358.1L1031.1 360.3L1020.2 373.0Z" fill="#ffc357"/><path d="M1020.2 373.0L1031.1 360.3L1041.3 362.5L1030.4 375.3Z" fill="#ffc357"/><path d="M1030.4 375.3L1041.3 362.5L1051.5 364.7L1040.7 377.6Z" fill="#ffc357"/><path d="M1021.1 358.1L1031.3 346.6L1041.3 348.7L1031.1 360.3Z" fill="#ff8257"/><path d="M1031.1 360.3L1041.3 348.7L1051.5 350.8L1041.3 362.5Z" fill="#ff8257"/><path d="M1041.3 362.5L1051.5 350.8L1061.7 352.9L1051.5 364.7Z" fill="#ff8257"/><path d="M1031.3 346.6L1041.8 335.7L1051.8 337.7L1041.3 348.7Z" fill="#fe575a"/><path d="M1041.3 348.7L1051.8 337.7L1061.9 339.8L1051.5 350.8Z" fill="#fe575a"/><path d="M1051.5 350.8L1061.9 339.8L1072.1 341.8L1061.7 352.9Z" fill="#fe575a"/>
<path d="M89.8 634.0L114.5 726.1M135.4 667.5L84.4 701.6M89.8 634.0L135.4 667.5M169.3 634.9L191.5 724.0M216.4 666.7L160.5 700.8M169.3 634.9L216.4 666.7M241.5 639.3L266.7 723.6M289.5 669.8L235.0 701.4M241.5 639.3L289.5 669.8M305.5 635.1L340.0 711.9M354.1 664.1L307.8 691.1M305.5 635.1L354.1 664.1M364.2 624.0L402.0 696.1M413.3 651.4L369.3 676.6M364.2 624.0L413.3 651.4M417.9 608.6L461.1 675.3M467.4 634.5L428.1 657.1M417.9 608.6L467.4 634.5M467.5 585.6L515.4 647.4M517.4 609.7L482.3 630.4M467.5 585.6L517.4 609.7M514.3 559.3L562.8 618.4M564.5 581.7L529.5 602.6M514.3 559.3L564.5 581.7M558.2 531.3L609.5 586.9M608.6 552.1L576.1 572.3M558.2 531.3L608.6 552.1M599.5 496.8L655.0 548.6M650.1 515.9L621.4 535.2M599.5 496.8L650.1 515.9M639.5 460.1L692.5 511.2M690.4 477.5L658.8 498.9M639.5 460.1L690.4 477.5M678.3 432.6L724.6 484.5M729.2 448.6L690.8 473.1M678.3 432.6L729.2 448.6M715.0 415.7L756.0 467.9M765.8 430.8L722.4 457.1M715.0 415.7L765.8 430.8M749.6 407.4L785.9 459.6M800.0 421.7L752.4 449.2M749.6 407.4L800.0 421.7M782.1 408.0L813.1 460.6M831.9 421.9L779.9 450.4M782.1 408.0L831.9 421.9M812.0 415.3L841.4 467.0M861.1 429.0L808.7 457.0M812.0 415.3L861.1 429.0M839.8 419.7L872.3 468.4M888.3 433.1L840.1 458.7M839.8 419.7L888.3 433.1M866.6 417.3L900.9 463.7M914.5 430.3L869.0 454.4M866.6 417.3L914.5 430.3M892.3 412.5L926.8 457.4M939.8 425.0L895.3 448.4M892.3 412.5L939.8 425.0M916.9 404.8L953.4 447.3M963.9 416.8L922.2 438.8M916.9 404.8L963.9 416.8M940.9 391.2L979.3 431.6M987.5 402.6L948.3 423.5M940.9 391.2L987.5 402.6M964.4 374.6L1003.4 413.5M1010.7 385.3L972.7 405.9M964.4 374.6L1010.7 385.3M987.3 354.0L1028.6 390.9M1033.4 364.0L998.1 383.8M987.3 354.0L1033.4 364.0M1010.2 328.6L1051.5 364.7M1056.1 337.9L1021.1 358.1M1010.2 328.6L1056.1 337.9M1032.4 306.1L1072.1 341.8M1078.1 314.6L1041.8 335.7M1032.4 306.1L1078.1 314.6M89.8 634.0L176.7 666.5L169.3 634.9M169.3 634.9L254.1 668.5L241.5 639.3M241.5 639.3L322.6 668.4L305.5 635.1M305.5 635.1L384.3 658.1L364.2 624.0M364.2 624.0L441.0 643.8L417.9 608.6M417.9 608.6L492.8 622.9L467.5 585.6M467.5 585.6L541.3 595.7L514.3 559.3M514.3 559.3L586.9 567.5L558.2 531.3M558.2 531.3L629.5 535.0L599.5 496.8M599.5 496.8L670.4 496.1L639.5 460.1M639.5 460.1L710.1 461.5L678.3 432.6M678.3 432.6L747.8 438.5L715.0 415.7M715.0 415.7L783.1 425.2L749.6 407.4M749.6 407.4L816.2 420.5L782.1 408.0M782.1 408.0L846.8 425.2L812.0 415.3M812.0 415.3L874.9 432.0L839.8 419.7M839.8 419.7L901.5 432.3L866.6 417.3M866.6 417.3L927.3 427.8L892.3 412.5M892.3 412.5L951.9 421.6L916.9 404.8M916.9 404.8L975.7 410.3L940.9 391.2M940.9 391.2L999.2 394.2L964.4 374.6M964.4 374.6L1022.1 375.5L987.3 354.0M987.3 354.0L1044.8 351.0L1010.2 328.6M1010.2 328.6L1067.3 325.8L1032.4 306.1" fill="none"/>
<path d="M89.8 634.0L135.4 667.5L131.2 679.2L88.8 647.5Z" fill="#db33c0"/>
<path d="M88.8 647.5L131.2 679.2L127.0 690.9L87.7 661.1Z" fill="#e233a1"/>
<path d="M87.7 661.1L127.0 690.9L122.8 702.6L86.6 674.6Z" fill="#e73388"/>
<path d="M86.6 674.6L122.8 702.6L118.7 714.3L85.5 688.1Z" fill="#e9337f"/>
<path d="M85.5 688.1L118.7 714.3L114.5 726.1L84.4 701.6Z" fill="#f23362"/>
<path d="M110.4 649.1L97.9 712.6"/>
<path d="M715.0 415.7L765.8 430.8L763.8 438.2L716.5 424.0Z" fill="#db33c1"/>
<path d="M716.5 424.0L763.8 438.2L761.9 445.6L718.0 432.3Z" fill="#db33c1"/>
<path d="M718.0 432.3L761.9 445.6L759.9 453.1L719.4 440.5Z" fill="#db33c1"/>
<path d="M719.4 440.5L759.9 453.1L758.0 460.5L720.9 448.8Z" fill="#db33c1"/>
<path d="M720.9 448.8L758.0 460.5L756.0 467.9L722.4 457.1Z" fill="#db33c1"/>
<path d="M737.9 422.5L737.5 462.0"/>
<path d="M1032.4 306.1L1078.1 314.6L1076.9 320.1L1034.3 312.0Z" fill="#e133a5"/>
<path d="M1034.3 312.0L1076.9 320.1L1075.7 325.5L1036.1 317.9Z" fill="#e43398"/>
<path d="M1036.1 317.9L1075.7 325.5L1074.5 331.0L1038.0 323.9Z" fill="#e73387"/>
<path d="M1038.0 323.9L1074.5 331.0L1073.3 336.4L1039.9 329.8Z" fill="#e9337f"/>
<path d="M1039.9 329.8L1073.3 336.4L1072.1 341.8L1041.8 335.7Z" fill="#f13366"/>
<path d="M1052.9 309.9L1055.4 338.5"/>
<path d="M135.4 667.5L176.7 666.5L173.0 676.2L131.9 677.4Z" fill="#e40f6d"/><path d="M131.9 677.4L173.0 676.2L169.3 685.9L128.4 687.2Z" fill="#e50f6c"/><path d="M128.4 687.2L169.3 685.9L165.6 695.5L124.9 697.0Z" fill="#e70f65"/><path d="M124.9 697.0L165.6 695.5L162.0 705.1L121.4 706.7Z" fill="#eb0f55"/><path d="M121.4 706.7L162.0 705.1L158.3 714.6L117.9 716.4Z" fill="#f20f3d"/><path d="M117.9 716.4L158.3 714.6L154.7 724.1L114.5 726.1Z" fill="#f90f23"/><path d="M176.7 666.5L216.4 666.7L212.2 676.4L173.0 676.2Z" fill="#ff3b0f"/><path d="M173.0 676.2L212.2 676.4L208.0 686.0L169.3 685.9Z" fill="#ff3c0f"/><path d="M169.3 685.9L208.0 686.0L203.9 695.5L165.6 695.5Z" fill="#ff3f0f"/><path d="M165.6 695.5L203.9 695.5L199.7 705.1L162.0 705.1Z" fill="#ff430f"/><path d="M162.0 705.1L199.7 705.1L195.6 714.6L158.3 714.6Z" fill="#ff480f"/><path d="M158.3 714.6L195.6 714.6L191.5 724.0L154.7 724.1Z" fill="#ff4b0f"/><path d="M216.4 666.7L254.1 668.5L249.7 678.0L212.2 676.4Z" fill="#ff9a0f"/><path d="M212.2 676.4L249.7 678.0L245.4 687.4L208.0 686.0Z" fill="#ff9b0f"/><path d="M208.0 686.0L245.4 687.4L241.1 696.8L203.9 695.5Z" fill="#ff9d0f"/><path d="M203.9 695.5L241.1 696.8L236.8 706.2L199.7 705.1Z" fill="#ffa00f"/><path d="M199.7 705.1L236.8 706.2L232.5 715.5L195.6 714.6Z" fill="#ffa40f"/><path d="M195.6 714.6L232.5 715.5L228.2 724.8L191.5 724.0Z" fill="#ffa80f"/><path d="M254.1 668.5L289.5 669.8L285.6 678.8L249.7 678.0Z" fill="#fff90f"/><path d="M249.7 678.0L285.6 678.8L281.8 687.9L245.4 687.4Z" fill="#fff90f"/><path d="M245.4 687.4L281.8 687.9L278.0 696.8L241.1 696.8Z" fill="#fffa0f"/><path d="M241.1 696.8L278.0 696.8L274.2 705.8L236.8 706.2Z" fill="#fffc0f"/><path d="M236.8 706.2L274.2 705.8L270.4 714.7L232.5 715.5Z" fill="#fffd0f"/><path d="M232.5 715.5L270.4 714.7L266.7 723.6L228.2 724.8Z" fill="#ffff0f"/><path d="M289.5 669.8L322.6 668.4L319.6 676.9L285.6 678.8Z" fill="#20eb0f"/><path d="M285.6 678.8L319.6 676.9L316.7 685.3L281.8 687.9Z" fill="#20eb0f"/><path d="M281.8 687.9L316.7 685.3L313.7 693.7L278.0 696.8Z" fill="#1fea0f"/><path d="M278.0 696.8L313.7 693.7L310.8 702.1L274.2 705.8Z" fill="#1cea0f"/><path d="M274.2 705.8L310.8 702.1L307.9 710.4L270.4 714.7Z" fill="#19e90f"/><path d="M270.4 714.7L307.9 710.4L305.0 718.7L266.7 723.6Z" fill="#16e90f"/><path d="M322.6 668.4L354.1 664.1L351.7 672.2L319.6 676.9Z" fill="#0ff299"/><path d="M319.6 676.9L351.7 672.2L349.4 680.2L316.7 685.3Z" fill="#0ff299"/><path d="M316.7 685.3L349.4 680.2L347.0 688.2L313.7 693.7Z" fill="#0ff29a"/><path d="M313.7 693.7L347.0 688.2L344.7 696.1L310.8 702.1Z" fill="#0ff39b"/><path d="M310.8 702.1L344.7 696.1L342.4 704.0L307.9 710.4Z" fill="#0ff39d"/><path d="M307.9 710.4L342.4 704.0L340.0 711.9L305.0 718.7Z" fill="#0ff3a0"/><path d="M354.1 664.1L384.3 658.1L382.2 665.9L351.7 672.2Z" fill="#0fddff"/><path d="M351.7 672.2L382.2 665.9L380.2 673.7L349.4 680.2Z" fill="#0fddff"/><path d="M349.4 680.2L380.2 673.7L378.1 681.4L347.0 688.2Z" fill="#0fddff"/><path d="M347.0 688.2L378.1 681.4L376.0 689.0L344.7 696.1Z" fill="#0fdcff"/><path d="M344.7 696.1L376.0 689.0L374.0 696.6L342.4 704.0Z" fill="#0fdbff"/><path d="M342.4 704.0L374.0 696.6L372.0 704.2L340.0 711.9Z" fill="#0fdaff"/><path d="M384.3 658.1L413.3 651.4L411.4 659.0L382.2 665.9Z" fill="#0f93ff"/><path d="M382.2 665.9L411.4 659.0L409.5 666.5L380.2 673.7Z" fill="#0f93ff"/><path d="M380.2 673.7L409.5 666.5L407.6 674.0L378.1 681.4Z" fill="#0f93ff"/><path d="M378.1 681.4L407.6 674.0L405.7 681.4L376.0 689.0Z" fill="#0f93ff"/><path d="M376.0 689.0L405.7 681.4L403.8 688.8L374.0 696.6Z" fill="#0f92ff"/><path d="M374.0 696.6L403.8 688.8L402.0 696.1L372.0 704.2Z" fill="#0f91ff"/><path d="M413.3 651.4L441.0 643.8L439.4 651.1L411.4 659.0Z" fill="#0f59ff"/><path d="M411.4 659.0L439.4 651.1L437.9 658.3L409.5 666.5Z" fill="#0f59ff"/><path d="M409.5 666.5L437.9 658.3L436.3 665.5L407.6 674.0Z" fill="#0f59ff"/><path d="M407.6 674.0L436.3 665.5L434.7 672.6L405.7 681.4Z" fill="#0f59ff"/><path d="M405.7 681.4L434.7 672.6L433.2 679.7L403.8 688.8Z" fill="#0f59ff"/><path d="M403.8 688.8L433.2 679.7L431.7 686.7L402.0 696.1Z" fill="#0f59ff"/><path d="M441.0 643.8L467.4 634.5L466.4 641.4L439.4 651.1Z" fill="#0f21ff"/><path d="M439.4 651.1L466.4 641.4L465.3 648.3L437.9 658.3Z" fill="#0f21ff"/><path d="M437.9 658.3L465.3 648.3L464.2 655.1L436.3 665.5Z" fill="#0f21ff"/><path d="M436.3 665.5L464.2 655.1L463.2 661.9L434.7 672.6Z" fill="#0f21ff"/><path d="M434.7 672.6L463.2 661.9L462.1 668.6L433.2 679.7Z" fill="#0f21ff"/><path d="M433.2 679.7L462.1 668.6L461.1 675.3L431.7 686.7Z" fill="#0f21ff"/><path d="M467.4 634.5L492.8 622.9L492.2 629.5L466.4 641.4Z" fill="#0f16ff"/><path d="M466.4 641.4L492.2 629.5L491.6 636.1L465.3 648.3Z" fill="#0f16ff"/><path d="M465.3 648.3L491.6 636.1L491.0 642.6L464.2 655.1Z" fill="#0f16ff"/><path d="M464.2 655.1L491.0 642.6L490.4 649.1L463.2 661.9Z" fill="#0f16ff"/><path d="M463.2 661.9L490.4 649.1L489.9 655.5L462.1 668.6Z" fill="#0f16ff"/><path d="M462.1 668.6L489.9 655.5L489.3 661.9L461.1 675.3Z" fill="#0f16ff"/><path d="M492.8 622.9L517.4 609.7L517.0 616.1L492.2 629.5Z" fill="#0f39ff"/><path d="M492.2 629.5L517.0 616.1L516.7 622.5L491.6 636.1Z" fill="#0f39ff"/><path d="M491.6 636.1L516.7 622.5L516.4 628.8L491.0 642.6Z" fill="#0f39ff"/><path d="M491.0 642.6L516.4 628.8L516.1 635.0L490.4 649.1Z" fill="#0f39ff"/><path d="M490.4 649.1L516.1 635.0L515.7 641.2L489.9 655.5Z" fill="#0f39ff"/><path d="M489.9 655.5L515.7 641.2L515.4 647.4L489.3 661.9Z" fill="#0f39ff"/><path d="M517.4 609.7L541.3 595.7L541.0 602.0L517.0 616.1Z" fill="#0f66ff"/><path d="M517.0 616.1L541.0 602.0L540.7 608.3L516.7 622.5Z" fill="#0f66ff"/><path d="M516.7 622.5L540.7 608.3L540.4 614.5L516.4 628.8Z" fill="#0f65ff"/><path d="M516.4 628.8L540.4 614.5L540.2 620.6L516.1 635.0Z" fill="#0f65ff"/><path d="M516.1 635.0L540.2 620.6L539.9 626.7L515.7 641.2Z" fill="#0f65ff"/><path d="M515.7 641.2L539.9 626.7L539.7 632.8L515.4 647.4Z" fill="#0f65ff"/><path d="M541.3 595.7L564.5 581.7L564.2 588.0L541.0 602.0Z" fill="#0fabff"/><path d="M541.0 602.0L564.2 588.0L563.9 594.1L540.7 608.3Z" fill="#0fabff"/><path d="M540.7 608.3L563.9 594.1L563.6 600.3L540.4 614.5Z" fill="#0fabff"/><path d="M540.4 614.5L563.6 600.3L563.3 606.4L540.2 620.6Z" fill="#0fabff"/><path d="M540.2 620.6L563.3 606.4L563.1 612.4L539.9 626.7Z" fill="#0fabff"/><path d="M539.9 626.7L563.1 612.4L562.8 618.4L539.7 632.8Z" fill="#0fabff"/><path d="M564.5 581.7L586.9 567.5L586.8 573.6L564.2 588.0Z" fill="#0ffaff"/><path d="M564.2 588.0L586.8 573.6L586.6 579.6L563.9 594.1Z" fill="#0ffaff"/><path d="M563.9 594.1L586.6 579.6L586.5 585.6L563.6 600.3Z" fill="#0ffaff"/><path d="M563.6 600.3L586.5 585.6L586.3 591.6L563.3 606.4Z" fill="#0ffaff"/><path d="M563.3 606.4L586.3 591.6L586.2 597.5L563.1 612.4Z" fill="#0ff9ff"/><path d="M563.1 612.4L586.2 597.5L586.1 603.3L562.8 618.4Z" fill="#0ff9ff"/><path d="M586.9 567.5L608.6 552.1L608.7 558.1L586.8 573.6Z" fill="#0fef80"/><path d="M586.8 573.6L608.7 558.1L608.9 563.9L586.6 579.6Z" fill="#0fef80"/><path d="M586.6 579.6L608.9 563.9L609.0 569.8L586.5 585.6Z" fill="#0fef81"/><path d="M586.5 585.6L609.0 569.8L609.2 575.5L586.3 591.6Z" fill="#0fef81"/><path d="M586.3 591.6L609.2 575.5L609.4 581.2L586.2 597.5Z" fill="#0fef81"/><path d="M586.2 597.5L609.4 581.2L609.5 586.9L586.1 603.3Z" fill="#0fef82"/><path d="M608.6 552.1L629.5 535.0L630.1 540.7L608.7 558.1Z" fill="#3bf00f"/><path d="M608.7 558.1L630.1 540.7L630.7 546.3L608.9 563.9Z" fill="#3bef0f"/><path d="M608.9 563.9L630.7 546.3L631.3 551.9L609.0 569.8Z" fill="#39ef0f"/><path d="M609.0 569.8L631.3 551.9L631.9 557.5L609.2 575.5Z" fill="#37ef0f"/><path d="M609.2 575.5L631.9 557.5L632.5 563.0L609.4 581.2Z" fill="#33ee0f"/><path d="M609.4 581.2L632.5 563.0L633.0 568.4L609.5 586.9Z" fill="#2fed0f"/><path d="M629.5 535.0L650.1 515.9L650.9 521.4L630.1 540.7Z" fill="#fff50f"/><path d="M630.1 540.7L650.9 521.4L651.8 527.0L630.7 546.3Z" fill="#fff50f"/><path d="M630.7 546.3L651.8 527.0L652.6 532.4L631.3 551.9Z" fill="#fff60f"/><path d="M631.3 551.9L652.6 532.4L653.4 537.9L631.9 557.5Z" fill="#fff80f"/><path d="M631.9 557.5L653.4 537.9L654.2 543.2L632.5 563.0Z" fill="#fffa0f"/><path d="M632.5 563.0L654.2 543.2L655.0 548.6L633.0 568.4Z" fill="#fffc0f"/><path d="M650.1 515.9L670.4 496.1L671.1 501.7L650.9 521.4Z" fill="#ff9e0f"/><path d="M650.9 521.4L671.1 501.7L671.9 507.3L651.8 527.0Z" fill="#ff9f0f"/><path d="M651.8 527.0L671.9 507.3L672.6 512.8L652.6 532.4Z" fill="#ffa00f"/><path d="M652.6 532.4L672.6 512.8L673.4 518.3L653.4 537.9Z" fill="#ffa20f"/><path d="M653.4 537.9L673.4 518.3L674.1 523.6L654.2 543.2Z" fill="#ffa40f"/><path d="M654.2 543.2L674.1 523.6L674.8 529.0L655.0 548.6Z" fill="#ffa70f"/><path d="M670.4 496.1L690.4 477.5L690.8 483.2L671.1 501.7Z" fill="#ff490f"/><path d="M671.1 501.7L690.8 483.2L691.1 488.9L671.9 507.3Z" fill="#ff490f"/><path d="M671.9 507.3L691.1 488.9L691.5 494.6L672.6 512.8Z" fill="#ff4a0f"/><path d="M672.6 512.8L691.5 494.6L691.8 500.2L673.4 518.3Z" fill="#ff4b0f"/><path d="M673.4 518.3L691.8 500.2L692.2 505.7L674.1 523.6Z" fill="#ff4b0f"/><path d="M674.1 523.6L692.2 505.7L692.5 511.2L674.8 529.0Z" fill="#ff4c0f"/><path d="M690.4 477.5L710.1 461.5L709.9 467.4L690.8 483.2Z" fill="#f70f2d"/><path d="M690.8 483.2L709.9 467.4L709.6 473.3L691.1 488.9Z" fill="#f70f2c"/><path d="M691.1 488.9L709.6 473.3L709.4 479.2L691.5 494.6Z" fill="#f80f2a"/><path d="M691.5 494.6L709.4 479.2L709.1 485.0L691.8 500.2Z" fill="#f90f25"/><path d="M691.8 500.2L709.1 485.0L708.9 490.7L692.2 505.7Z" fill="#fa0f20"/><path d="M692.2 505.7L708.9 490.7L708.7 496.4L692.5 511.2Z" fill="#fc0f19"/><path d="M710.1 461.5L729.2 448.6L728.5 454.7L709.9 467.4Z" fill="#e30f74"/><path d="M709.9 467.4L728.5 454.7L727.7 460.8L709.6 473.3Z" fill="#e30f74"/><path d="M709.6 473.3L727.7 460.8L726.9 466.8L709.4 479.2Z" fill="#e30f73"/><path d="M709.4 479.2L726.9 466.8L726.1 472.7L709.1 485.0Z" fill="#e30f72"/><path d="M709.1 485.0L726.1 472.7L725.3 478.7L708.9 490.7Z" fill="#e40f70"/><path d="M708.9 490.7L725.3 478.7L724.6 484.5L708.7 496.4Z" fill="#e40f6f"/><path d="M729.2 448.6L747.8 438.5L746.5 444.7L728.5 454.7Z" fill="#d90fa3"/><path d="M728.5 454.7L746.5 444.7L745.3 450.9L727.7 460.8Z" fill="#d90fa3"/><path d="M727.7 460.8L745.3 450.9L744.1 457.0L726.9 466.8Z" fill="#d90fa1"/><path d="M726.9 466.8L744.1 457.0L742.8 463.1L726.1 472.7Z" fill="#d90f9f"/><path d="M726.1 472.7L742.8 463.1L741.6 469.1L725.3 478.7Z" fill="#da0f9b"/><path d="M725.3 478.7L741.6 469.1L740.4 475.1L724.6 484.5Z" fill="#db0f97"/><path d="M747.8 438.5L765.8 430.8L764.1 437.1L746.5 444.7Z" fill="#d50fb5"/><path d="M746.5 444.7L764.1 437.1L762.5 443.3L745.3 450.9Z" fill="#d50fb5"/><path d="M745.3 450.9L762.5 443.3L760.9 449.5L744.1 457.0Z" fill="#d50fb4"/><path d="M744.1 457.0L760.9 449.5L759.2 455.7L742.8 463.1Z" fill="#d50fb4"/><path d="M742.8 463.1L759.2 455.7L757.6 461.8L741.6 469.1Z" fill="#d50fb3"/><path d="M741.6 469.1L757.6 461.8L756.0 467.9L740.4 475.1Z" fill="#d50fb1"/><path d="M765.8 430.8L783.1 425.2L781.1 431.5L764.1 437.1Z" fill="#d50fb5"/><path d="M764.1 437.1L781.1 431.5L779.2 437.8L762.5 443.3Z" fill="#d50fb5"/><path d="M762.5 443.3L779.2 437.8L777.2 444.1L760.9 449.5Z" fill="#d50fb4"/><path d="M760.9 449.5L777.2 444.1L775.2 450.3L759.2 455.7Z" fill="#d50fb4"/><path d="M759.2 455.7L775.2 450.3L773.3 456.5L757.6 461.8Z" fill="#d50fb3"/><path d="M757.6 461.8L773.3 456.5L771.3 462.7L756.0 467.9Z" fill="#d50fb2"/><path d="M783.1 425.2L800.0 421.7L797.6 428.1L781.1 431.5Z" fill="#d80fa4"/><path d="M781.1 431.5L797.6 428.1L795.2 434.4L779.2 437.8Z" fill="#d80fa4"/><path d="M779.2 437.8L795.2 434.4L792.9 440.8L777.2 444.1Z" fill="#d90fa2"/><path d="M777.2 444.1L792.9 440.8L790.5 447.1L775.2 450.3Z" fill="#d90fa0"/><path d="M775.2 450.3L790.5 447.1L788.2 453.3L773.3 456.5Z" fill="#da0f9c"/><path d="M773.3 456.5L788.2 453.3L785.9 459.6L771.3 462.7Z" fill="#db0f99"/><path d="M800.0 421.7L816.2 420.5L813.5 427.0L797.6 428.1Z" fill="#e20f76"/><path d="M797.6 428.1L813.5 427.0L810.7 433.4L795.2 434.4Z" fill="#e20f75"/><path d="M795.2 434.4L810.7 433.4L808.0 439.8L792.9 440.8Z" fill="#e30f74"/><path d="M792.9 440.8L808.0 439.8L805.2 446.2L790.5 447.1Z" fill="#e30f73"/><path d="M790.5 447.1L805.2 446.2L802.5 452.5L788.2 453.3Z" fill="#e30f71"/><path d="M788.2 453.3L802.5 452.5L799.8 458.8L785.9 459.6Z" fill="#e40f70"/><path d="M816.2 420.5L831.9 421.9L828.7 428.4L813.5 427.0Z" fill="#f50f34"/><path d="M813.5 427.0L828.7 428.4L825.6 434.9L810.7 433.4Z" fill="#f50f33"/><path d="M810.7 433.4L825.6 434.9L822.4 441.3L808.0 439.8Z" fill="#f60f31"/><path d="M808.0 439.8L822.4 441.3L819.3 447.8L805.2 446.2Z" fill="#f70f2c"/><path d="M805.2 446.2L819.3 447.8L816.2 454.2L802.5 452.5Z" fill="#f90f26"/><path d="M802.5 452.5L816.2 454.2L813.1 460.6L799.8 458.8Z" fill="#fa0f1f"/><path d="M831.9 421.9L846.8 425.2L843.5 431.6L828.7 428.4Z" fill="#ff430f"/><path d="M828.7 428.4L843.5 431.6L840.1 438.1L825.6 434.9Z" fill="#ff440f"/><path d="M825.6 434.9L840.1 438.1L836.8 444.6L822.4 441.3Z" fill="#ff450f"/><path d="M822.4 441.3L836.8 444.6L833.5 451.0L819.3 447.8Z" fill="#ff470f"/><path d="M819.3 447.8L833.5 451.0L830.2 457.4L816.2 454.2Z" fill="#ff490f"/><path d="M816.2 454.2L830.2 457.4L826.9 463.8L813.1 460.6Z" fill="#ff4b0f"/><path d="M846.8 425.2L861.1 429.0L857.8 435.4L843.5 431.6Z" fill="#ff940f"/><path d="M843.5 431.6L857.8 435.4L854.5 441.7L840.1 438.1Z" fill="#ff940f"/><path d="M840.1 438.1L854.5 441.7L851.2 448.1L836.8 444.6Z" fill="#ff950f"/><path d="M836.8 444.6L851.2 448.1L848.0 454.4L833.5 451.0Z" fill="#ff970f"/><path d="M833.5 451.0L848.0 454.4L844.7 460.7L830.2 457.4Z" fill="#ff9a0f"/><path d="M830.2 457.4L844.7 460.7L841.4 467.0L826.9 463.8Z" fill="#ff9e0f"/><path d="M861.1 429.0L874.9 432.0L871.8 438.2L857.8 435.4Z" fill="#ffe20f"/><path d="M857.8 435.4L871.8 438.2L868.8 444.4L854.5 441.7Z" fill="#ffe20f"/><path d="M854.5 441.7L868.8 444.4L865.8 450.5L851.2 448.1Z" fill="#ffe30f"/><path d="M851.2 448.1L865.8 450.5L862.8 456.6L848.0 454.4Z" fill="#ffe50f"/><path d="M848.0 454.4L862.8 456.6L859.8 462.7L844.7 460.7Z" fill="#ffe80f"/><path d="M844.7 460.7L859.8 462.7L856.8 468.8L841.4 467.0Z" fill="#ffeb0f"/><path d="M874.9 432.0L888.3 433.1L885.6 439.0L871.8 438.2Z" fill="#7bfb0f"/><path d="M871.8 438.2L885.6 439.0L882.9 444.9L868.8 444.4Z" fill="#7afb0f"/><path d="M868.8 444.4L882.9 444.9L880.3 450.8L865.8 450.5Z" fill="#79fb0f"/><path d="M865.8 450.5L880.3 450.8L877.6 456.7L862.8 456.6Z" fill="#77fb0f"/><path d="M862.8 456.6L877.6 456.7L875.0 462.6L859.8 462.7Z" fill="#74fa0f"/><path d="M859.8 462.7L875.0 462.6L872.3 468.4L856.8 468.8Z" fill="#70f90f"/><path d="M888.3 433.1L901.5 432.3L899.1 438.0L885.6 439.0Z" fill="#0fed60"/><path d="M885.6 439.0L899.1 438.0L896.6 443.8L882.9 444.9Z" fill="#0fed60"/><path d="M882.9 444.9L896.6 443.8L894.2 449.5L880.3 450.8Z" fill="#0fed61"/><path d="M880.3 450.8L894.2 449.5L891.8 455.2L877.6 456.7Z" fill="#0fed62"/><path d="M877.6 456.7L891.8 455.2L889.4 460.8L875.0 462.6Z" fill="#0fed63"/><path d="M875.0 462.6L889.4 460.8L887.0 466.5L872.3 468.4Z" fill="#0fed65"/><path d="M901.5 432.3L914.5 430.3L912.2 435.9L899.1 438.0Z" fill="#0ffce5"/><path d="M899.1 438.0L912.2 435.9L909.9 441.5L896.6 443.8Z" fill="#0ffce5"/><path d="M896.6 443.8L909.9 441.5L907.7 447.1L894.2 449.5Z" fill="#0ffce5"/><path d="M894.2 449.5L907.7 447.1L905.4 452.6L891.8 455.2Z" fill="#0ffce6"/><path d="M891.8 455.2L905.4 452.6L903.1 458.2L889.4 460.8Z" fill="#0ffce7"/><path d="M889.4 460.8L903.1 458.2L900.9 463.7L887.0 466.5Z" fill="#0ffce8"/><path d="M914.5 430.3L927.3 427.8L925.1 433.3L912.2 435.9Z" fill="#0fceff"/><path d="M912.2 435.9L925.1 433.3L922.8 438.8L909.9 441.5Z" fill="#0fceff"/><path d="M909.9 441.5L922.8 438.8L920.6 444.3L907.7 447.1Z" fill="#0fcdff"/><path d="M907.7 447.1L920.6 444.3L918.3 449.8L905.4 452.6Z" fill="#0fcdff"/><path d="M905.4 452.6L918.3 449.8L916.1 455.2L903.1 458.2Z" fill="#0fcdff"/><path d="M903.1 458.2L916.1 455.2L913.9 460.7L900.9 463.7Z" fill="#0fccff"/><path d="M927.3 427.8L939.8 425.0L937.6 430.5L925.1 433.3Z" fill="#0f97ff"/><path d="M925.1 433.3L937.6 430.5L935.4 435.9L922.8 438.8Z" fill="#0f97ff"/><path d="M922.8 438.8L935.4 435.9L933.3 441.3L920.6 444.3Z" fill="#0f97ff"/><path d="M920.6 444.3L933.3 441.3L931.1 446.7L918.3 449.8Z" fill="#0f97ff"/><path d="M918.3 449.8L931.1 446.7L929.0 452.0L916.1 455.2Z" fill="#0f96ff"/><path d="M916.1 455.2L929.0 452.0L926.8 457.4L913.9 460.7Z" fill="#0f96ff"/><path d="M939.8 425.0L951.9 421.6L949.9 426.9L937.6 430.5Z" fill="#0f5fff"/><path d="M937.6 430.5L949.9 426.9L947.9 432.2L935.4 435.9Z" fill="#0f5fff"/><path d="M935.4 435.9L947.9 432.2L945.9 437.4L933.3 441.3Z" fill="#0f5fff"/><path d="M933.3 441.3L945.9 437.4L943.9 442.7L931.1 446.7Z" fill="#0f5fff"/><path d="M931.1 446.7L943.9 442.7L942.0 447.9L929.0 452.0Z" fill="#0f5fff"/><path d="M929.0 452.0L942.0 447.9L940.0 453.1L926.8 457.4Z" fill="#0f5fff"/><path d="M951.9 421.6L963.9 416.8L962.1 422.0L949.9 426.9Z" fill="#0f4bff"/><path d="M949.9 426.9L962.1 422.0L960.4 427.1L947.9 432.2Z" fill="#0f4bff"/><path d="M947.9 432.2L960.4 427.1L958.6 432.2L945.9 437.4Z" fill="#0f4bff"/><path d="M945.9 437.4L958.6 432.2L956.9 437.3L943.9 442.7Z" fill="#0f4bff"/><path d="M943.9 442.7L956.9 437.3L955.2 442.3L942.0 447.9Z" fill="#0f4bff"/><path d="M942.0 447.9L955.2 442.3L953.4 447.3L940.0 453.1Z" fill="#0f4bff"/><path d="M963.9 416.8L975.7 410.3L974.2 415.3L962.1 422.0Z" fill="#0f4dff"/><path d="M962.1 422.0L974.2 415.3L972.7 420.3L960.4 427.1Z" fill="#0f4cff"/><path d="M960.4 427.1L972.7 420.3L971.2 425.3L958.6 432.2Z" fill="#0f4cff"/><path d="M958.6 432.2L971.2 425.3L969.7 430.2L956.9 437.3Z" fill="#0f4cff"/><path d="M956.9 437.3L969.7 430.2L968.2 435.1L955.2 442.3Z" fill="#0f4cff"/><path d="M955.2 442.3L968.2 435.1L966.7 440.0L953.4 447.3Z" fill="#0f4cff"/><path d="M975.7 410.3L987.5 402.6L986.1 407.5L974.2 415.3Z" fill="#0f66ff"/><path d="M974.2 415.3L986.1 407.5L984.8 412.4L972.7 420.3Z" fill="#0f66ff"/><path d="M972.7 420.3L984.8 412.4L983.4 417.2L971.2 425.3Z" fill="#0f66ff"/><path d="M971.2 425.3L983.4 417.2L982.0 422.1L969.7 430.2Z" fill="#0f65ff"/><path d="M969.7 430.2L982.0 422.1L980.7 426.9L968.2 435.1Z" fill="#0f65ff"/><path d="M968.2 435.1L980.7 426.9L979.3 431.6L966.7 440.0Z" fill="#0f65ff"/><path d="M987.5 402.6L999.2 394.2L997.9 399.0L986.1 407.5Z" fill="#0faaff"/><path d="M986.1 407.5L997.9 399.0L996.6 403.8L984.8 412.4Z" fill="#0faaff"/><path d="M984.8 412.4L996.6 403.8L995.3 408.6L983.4 417.2Z" fill="#0faaff"/><path d="M983.4 417.2L995.3 408.6L993.9 413.4L982.0 422.1Z" fill="#0faaff"/><path d="M982.0 422.1L993.9 413.4L992.6 418.1L980.7 426.9Z" fill="#0faaff"/><path d="M980.7 426.9L992.6 418.1L991.4 422.8L979.3 431.6Z" fill="#0faaff"/><path d="M999.2 394.2L1010.7 385.3L1009.5 390.1L997.9 399.0Z" fill="#0ff8ff"/><path d="M997.9 399.0L1009.5 390.1L1008.3 394.8L996.6 403.8Z" fill="#0ff8ff"/><path d="M996.6 403.8L1008.3 394.8L1007.0 399.6L995.3 408.6Z" fill="#0ff8ff"/><path d="M995.3 408.6L1007.0 399.6L1005.8 404.2L993.9 413.4Z" fill="#0ff7ff"/><path d="M993.9 413.4L1005.8 404.2L1004.6 408.9L992.6 418.1Z" fill="#0ff7ff"/><path d="M992.6 418.1L1004.6 408.9L1003.4 413.5L991.4 422.8Z" fill="#0ff6ff"/><path d="M1010.7 385.3L1022.1 375.5L1021.0 380.1L1009.5 390.1Z" fill="#0fef82"/><path d="M1009.5 390.1L1021.0 380.1L1020.0 384.8L1008.3 394.8Z" fill="#0fef82"/><path d="M1008.3 394.8L1020.0 384.8L1018.9 389.4L1007.0 399.6Z" fill="#0fef82"/><path d="M1007.0 399.6L1018.9 389.4L1017.9 394.0L1005.8 404.2Z" fill="#0ff083"/><path d="M1005.8 404.2L1017.9 394.0L1016.9 398.6L1004.6 408.9Z" fill="#0ff084"/><path d="M1004.6 408.9L1016.9 398.6L1015.9 403.1L1003.4 413.5Z" fill="#0ff085"/><path d="M1022.1 375.5L1033.4 364.0L1032.6 368.6L1021.0 380.1Z" fill="#34ee0f"/><path d="M1021.0 380.1L1032.6 368.6L1031.8 373.1L1020.0 384.8Z" fill="#34ee0f"/><path d="M1020.0 384.8L1031.8 373.1L1031.0 377.6L1018.9 389.4Z" fill="#32ee0f"/><path d="M1018.9 389.4L1031.0 377.6L1030.2 382.1L1017.9 394.0Z" fill="#2fed0f"/><path d="M1017.9 394.0L1030.2 382.1L1029.4 386.5L1016.9 398.6Z" fill="#2bed0f"/><path d="M1016.9 398.6L1029.4 386.5L1028.6 390.9L1015.9 403.1Z" fill="#26ec0f"/><path d="M1033.4 364.0L1044.8 351.0L1044.1 355.5L1032.6 368.6Z" fill="#fff70f"/><path d="M1032.6 368.6L1044.1 355.5L1043.4 360.0L1031.8 373.1Z" fill="#fff70f"/><path d="M1031.8 373.1L1043.4 360.0L1042.7 364.5L1031.0 377.6Z" fill="#fff80f"/><path d="M1031.0 377.6L1042.7 364.5L1042.0 368.9L1030.2 382.1Z" fill="#fffa0f"/><path d="M1030.2 382.1L1042.0 368.9L1041.3 373.3L1029.4 386.5Z" fill="#fffc0f"/><path d="M1029.4 386.5L1041.3 373.3L1040.7 377.6L1028.6 390.9Z" fill="#fffe0f"/><path d="M1044.8 351.0L1056.1 337.9L1055.4 342.4L1044.1 355.5Z" fill="#ff9e0f"/><path d="M1044.1 355.5L1055.4 342.4L1054.6 346.9L1043.4 360.0Z" fill="#ff9e0f"/><path d="M1043.4 360.0L1054.6 346.9L1053.8 351.4L1042.7 364.5Z" fill="#ffa00f"/><path d="M1042.7 364.5L1053.8 351.4L1053.0 355.9L1042.0 368.9Z" fill="#ffa20f"/><path d="M1042.0 368.9L1053.0 355.9L1052.3 360.3L1041.3 373.3Z" fill="#ffa50f"/><path d="M1041.3 373.3L1052.3 360.3L1051.5 364.7L1040.7 377.6Z" fill="#ffa90f"/><path d="M1056.1 337.9L1067.3 325.8L1066.3 330.4L1055.4 342.4Z" fill="#ff440f"/><path d="M1055.4 342.4L1066.3 330.4L1065.4 335.0L1054.6 346.9Z" fill="#ff450f"/><path d="M1054.6 346.9L1065.4 335.0L1064.5 339.5L1053.8 351.4Z" fill="#ff460f"/><path d="M1053.8 351.4L1064.5 339.5L1063.5 344.0L1053.0 355.9Z" fill="#ff490f"/><path d="M1053.0 355.9L1063.5 344.0L1062.6 348.5L1052.3 360.3Z" fill="#ff4b0f"/><path d="M1052.3 360.3L1062.6 348.5L1061.7 352.9L1051.5 364.7Z" fill="#ff4c0f"/><path d="M1067.3 325.8L1078.1 314.6L1077.1 319.2L1066.3 330.4Z" fill="#e90f5d"/><path d="M1066.3 330.4L1077.1 319.2L1076.1 323.8L1065.4 335.0Z" fill="#ea0f5a"/><path d="M1065.4 335.0L1076.1 323.8L1075.1 328.4L1064.5 339.5Z" fill="#ec0f51"/><path d="M1064.5 339.5L1075.1 328.4L1074.1 332.9L1063.5 344.0Z" fill="#f10f42"/><path d="M1063.5 344.0L1074.1 332.9L1073.1 337.4L1062.6 348.5Z" fill="#f60f2e"/><path d="M1062.6 348.5L1073.1 337.4L1072.1 341.8L1061.7 352.9Z" fill="#fc0f1b"/>
<path d="M85.9 631.1L126.3 631.1L134.4 636.8L93.8 636.9Z" fill="#f180b1"/><path d="M126.3 631.1L165.2 632.1L173.4 637.7L134.4 636.8Z" fill="#ff9780"/><path d="M165.2 632.1L202.4 634.6L210.7 640.1L173.4 637.7Z" fill="#ffca80"/><path d="M202.4 634.6L237.3 636.6L245.7 642.0L210.7 640.1Z" fill="#fffc80"/><path d="M237.3 636.6L270.0 636.0L278.5 641.2L245.7 642.0Z" fill="#88f480"/><path d="M270.0 636.0L301.2 632.6L309.8 637.7L278.5 641.2Z" fill="#80f8c9"/><path d="M301.2 632.6L331.1 627.5L339.7 632.4L309.8 637.7Z" fill="#80edff"/><path d="M331.1 627.5L359.9 621.6L368.5 626.4L339.7 632.4Z" fill="#80c6ff"/><path d="M359.9 621.6L387.3 614.8L396.0 619.5L368.5 626.4Z" fill="#80a7ff"/><path d="M387.3 614.8L413.6 606.4L422.3 610.9L396.0 619.5Z" fill="#8089ff"/><path d="M413.6 606.4L438.7 595.7L447.5 600.1L422.3 610.9Z" fill="#8083ff"/><path d="M438.7 595.7L463.1 583.5L471.9 587.7L447.5 600.1Z" fill="#8096ff"/><path d="M463.1 583.5L486.8 570.4L495.7 574.5L471.9 587.7Z" fill="#80adff"/><path d="M486.8 570.4L509.9 557.3L518.8 561.3L495.7 574.5Z" fill="#80d2ff"/><path d="M509.9 557.3L532.2 543.9L541.1 547.8L518.8 561.3Z" fill="#80fcff"/><path d="M532.2 543.9L553.7 529.5L562.6 533.2L541.1 547.8Z" fill="#80f7bc"/><path d="M553.7 529.5L574.6 513.3L583.5 516.8L562.6 533.2Z" fill="#97f780"/><path d="M574.6 513.3L595.0 495.1L603.9 498.5L583.5 516.8Z" fill="#fffa80"/><path d="M595.0 495.1L615.1 476.3L624.1 479.5L603.9 498.5Z" fill="#ffcc80"/><path d="M615.1 476.3L635.0 458.6L644.1 461.7L624.1 479.5Z" fill="#ff9e80"/><path d="M635.0 458.6L654.7 443.4L663.7 446.3L644.1 461.7Z" fill="#fb808f"/><path d="M654.7 443.4L673.8 431.2L682.9 434.0L663.7 446.3Z" fill="#f080b5"/><path d="M673.8 431.2L692.5 421.6L701.5 424.4L682.9 434.0Z" fill="#eb80ce"/><path d="M692.5 421.6L710.5 414.4L719.5 417.1L701.5 424.4Z" fill="#e880d8"/><path d="M710.5 414.4L728.1 409.2L737.1 411.8L719.5 417.1Z" fill="#e880d8"/><path d="M728.1 409.2L745.2 406.1L754.1 408.6L737.1 411.8Z" fill="#ea80ce"/><path d="M745.2 406.1L761.7 405.2L770.6 407.7L754.1 408.6Z" fill="#f080b6"/><path d="M761.7 405.2L777.7 406.7L786.5 409.2L770.6 407.7Z" fill="#fa8093"/><path d="M777.7 406.7L793.0 410.2L801.8 412.6L786.5 409.2Z" fill="#ff9b80"/><path d="M793.0 410.2L807.7 414.1L816.4 416.6L801.8 412.6Z" fill="#ffc680"/><path d="M807.7 414.1L821.8 417.3L830.4 419.7L816.4 416.6Z" fill="#fff080"/><path d="M821.8 417.3L835.5 418.5L844.1 420.9L830.4 419.7Z" fill="#b8fd80"/><path d="M835.5 418.5L849.0 417.9L857.6 420.3L844.1 420.9Z" fill="#80f5ab"/><path d="M849.0 417.9L862.3 416.1L870.9 418.5L857.6 420.3Z" fill="#80fdf1"/><path d="M862.3 416.1L875.4 413.9L883.9 416.1L870.9 418.5Z" fill="#80e5ff"/><path d="M875.4 413.9L888.1 411.4L896.6 413.6L883.9 416.1Z" fill="#80c8ff"/><path d="M888.1 411.4L900.5 408.2L908.9 410.4L896.6 413.6Z" fill="#80aaff"/><path d="M900.5 408.2L912.7 403.7L921.1 405.9L908.9 410.4Z" fill="#809fff"/><path d="M912.7 403.7L924.8 397.6L933.1 399.7L921.1 405.9Z" fill="#80a0ff"/><path d="M924.8 397.6L936.8 390.2L945.1 392.2L933.1 399.7Z" fill="#80adff"/><path d="M936.8 390.2L948.6 382.1L956.9 384.1L945.1 392.2Z" fill="#80d2ff"/><path d="M948.6 382.1L960.3 373.6L968.5 375.5L956.9 384.1Z" fill="#80fbff"/><path d="M960.3 373.6L971.8 364.1L980.0 366.0L968.5 375.5Z" fill="#80f7bd"/><path d="M971.8 364.1L983.2 353.1L991.4 354.9L980.0 366.0Z" fill="#93f680"/><path d="M983.2 353.1L994.7 340.5L1002.9 342.2L991.4 354.9Z" fill="#fffb80"/><path d="M994.7 340.5L1006.1 327.8L1014.3 329.5L1002.9 342.2Z" fill="#ffcb80"/><path d="M1006.1 327.8L1017.4 316.1L1025.6 317.7L1014.3 329.5Z" fill="#ff9c80"/><path d="M1017.4 316.1L1028.3 305.3L1036.5 306.8L1025.6 317.7Z" fill="#f380a8"/>
<path d="M131.1 664.3L172.3 663.4L181.2 669.7L139.8 670.7Z" fill="#f180b1"/><path d="M172.3 663.4L211.9 663.7L220.9 669.8L181.2 669.7Z" fill="#ff9780"/><path d="M211.9 663.7L249.5 665.5L258.6 671.5L220.9 669.8Z" fill="#ffca80"/><path d="M249.5 665.5L284.9 666.9L294.1 672.7L258.6 671.5Z" fill="#fffc80"/><path d="M284.9 666.9L318.0 665.6L327.2 671.3L294.1 672.7Z" fill="#88f480"/><path d="M318.0 665.6L349.5 661.4L358.8 666.9L327.2 671.3Z" fill="#80f8c9"/><path d="M349.5 661.4L379.7 655.5L389.0 660.8L358.8 666.9Z" fill="#80edff"/><path d="M379.7 655.5L408.7 648.8L418.0 654.0L389.0 660.8Z" fill="#80c6ff"/><path d="M408.7 648.8L436.3 641.3L445.7 646.3L418.0 654.0Z" fill="#80a7ff"/><path d="M436.3 641.3L462.7 632.0L472.2 636.9L445.7 646.3Z" fill="#8089ff"/><path d="M462.7 632.0L488.1 620.6L497.5 625.3L472.2 636.9Z" fill="#8083ff"/><path d="M488.1 620.6L512.6 607.4L522.1 612.0L497.5 625.3Z" fill="#8096ff"/><path d="M512.6 607.4L536.5 593.5L546.0 597.9L522.1 612.0Z" fill="#80adff"/><path d="M536.5 593.5L559.7 579.6L569.2 583.9L546.0 597.9Z" fill="#80d2ff"/><path d="M559.7 579.6L582.1 565.4L591.7 569.5L569.2 583.9Z" fill="#80fcff"/><path d="M582.1 565.4L603.8 550.2L613.4 554.1L591.7 569.5Z" fill="#80f7bc"/><path d="M603.8 550.2L624.8 533.1L634.3 536.9L613.4 554.1Z" fill="#97f780"/><path d="M624.8 533.1L645.3 514.0L654.9 517.7L634.3 536.9Z" fill="#fffa80"/><path d="M645.3 514.0L665.6 494.4L675.2 497.9L654.9 517.7Z" fill="#ffcc80"/><path d="M665.6 494.4L685.6 475.9L695.2 479.2L675.2 497.9Z" fill="#ff9e80"/><path d="M685.6 475.9L705.3 459.9L714.9 463.1L695.2 479.2Z" fill="#fb808f"/><path d="M705.3 459.9L724.4 447.1L734.1 450.1L714.9 463.1Z" fill="#f080b5"/><path d="M724.4 447.1L743.0 437.0L752.6 439.9L734.1 450.1Z" fill="#eb80ce"/><path d="M743.0 437.0L761.0 429.4L770.6 432.2L752.6 439.9Z" fill="#e880d8"/><path d="M761.0 429.4L778.4 423.8L787.9 426.5L770.6 432.2Z" fill="#e880d8"/><path d="M778.4 423.8L795.2 420.3L804.7 423.0L787.9 426.5Z" fill="#ea80ce"/><path d="M795.2 420.3L811.5 419.2L821.0 421.9L804.7 423.0Z" fill="#f080b6"/><path d="M811.5 419.2L827.2 420.6L836.6 423.2L821.0 421.9Z" fill="#fa8093"/><path d="M827.2 420.6L842.2 423.9L851.5 426.5L836.6 423.2Z" fill="#ff9b80"/><path d="M842.2 423.9L856.5 427.7L865.8 430.3L851.5 426.5Z" fill="#ffc680"/><path d="M856.5 427.7L870.3 430.8L879.5 433.3L865.8 430.3Z" fill="#fff080"/><path d="M870.3 430.8L883.7 431.8L892.9 434.4L879.5 433.3Z" fill="#b8fd80"/><path d="M883.7 431.8L897.0 431.0L906.1 433.5L892.9 434.4Z" fill="#80f5ab"/><path d="M897.0 431.0L910.0 429.1L919.1 431.5L906.1 433.5Z" fill="#80fdf1"/><path d="M910.0 429.1L922.8 426.6L931.8 429.0L919.1 431.5Z" fill="#80e5ff"/><path d="M922.8 426.6L935.3 423.9L944.2 426.2L931.8 429.0Z" fill="#80c8ff"/><path d="M935.3 423.9L947.5 420.4L956.4 422.7L944.2 426.2Z" fill="#80aaff"/><path d="M947.5 420.4L959.5 415.7L968.3 417.9L956.4 422.7Z" fill="#809fff"/><path d="M959.5 415.7L971.3 409.2L980.1 411.4L968.3 417.9Z" fill="#80a0ff"/><path d="M971.3 409.2L983.2 401.5L991.9 403.7L980.1 411.4Z" fill="#80adff"/><path d="M983.2 401.5L994.9 393.1L1003.6 395.2L991.9 403.7Z" fill="#80d2ff"/><path d="M994.9 393.1L1006.4 384.3L1015.1 386.3L1003.6 395.2Z" fill="#80fbff"/><path d="M1006.4 384.3L1017.7 374.5L1026.4 376.4L1015.1 386.3Z" fill="#80f7bd"/><path d="M1017.7 374.5L1029.0 363.1L1037.7 364.9L1026.4 376.4Z" fill="#93f680"/><path d="M1029.0 363.1L1040.5 350.1L1049.1 351.9L1037.7 364.9Z" fill="#fffb80"/><path d="M1040.5 350.1L1051.8 337.0L1060.5 338.7L1049.1 351.9Z" fill="#ffcb80"/><path d="M1051.8 337.0L1063.0 325.0L1071.6 326.6L1060.5 338.7Z" fill="#ff9c80"/><path d="M1063.0 325.0L1073.8 313.8L1082.4 315.4L1071.6 326.6Z" fill="#f380a8"/>
</g>
<path d="M135.4 667.5L114.5 726.1" stroke="#000" stroke-width="2.2"/>
<path d="M114.5 726.1L135.0 724.9L154.7 724.1L173.5 723.7L191.5 724.0L209.6 724.5L228.2 724.8L247.3 724.6L266.7 723.6L286.2 721.5L305.0 718.7L323.0 715.5L340.0 711.9L356.4 708.1L372.0 704.2L387.0 700.2L402.0 696.1L416.8 691.6L431.7 686.7L446.4 681.3L461.1 675.3L475.5 668.8L489.3 661.9L502.6 654.7L515.4 647.4L527.8 640.1L539.7 632.8L551.2 625.6L562.8 618.4L574.4 611.0L586.1 603.3L597.8 595.3L609.5 586.9L621.3 578.0L633.0 568.4L644.3 558.5L655.0 548.6L665.2 538.6L674.8 529.0L683.9 519.8L692.5 511.2L700.7 503.4L708.7 496.4L716.6 490.2L724.6 484.5L732.5 479.6L740.4 475.1L748.2 471.3L756.0 467.9L763.8 465.0L771.3 462.7L778.7 460.8L785.9 459.6L792.9 458.9L799.8 458.8L806.4 459.4L813.1 460.6L819.9 462.1L826.9 463.8L834.0 465.5L841.4 467.0L849.0 468.1L856.8 468.8L864.6 468.8L872.3 468.4L879.8 467.6L887.0 466.5L894.1 465.1L900.9 463.7L907.5 462.2L913.9 460.7L920.3 459.1L926.8 457.4L933.4 455.4L940.0 453.1L946.7 450.4L953.4 447.3L960.1 443.8L966.7 440.0L973.1 435.9L979.3 431.6L985.4 427.3L991.4 422.8L997.4 418.3L1003.4 413.5L1009.6 408.5L1015.9 403.1L1022.2 397.2L1028.6 390.9L1034.8 384.3L1040.7 377.6L1046.2 371.0L1051.5 364.7L1056.6 358.7L1061.7 352.9L1066.9 347.4L1072.1 341.8" stroke="#000" stroke-width="1.3" fill="none"/>
<path d="M634 449.8L864.6 526.8M690.6 468.7L692 590.6M794.6 503.5L792.3 632" stroke="#c800c8" stroke-width="1.7" fill="none"/>
<path d="M757 470.500l-3.500 2.600 7.500 3.400-7.500 3.400 7.500 3.400-7.500 3.400 7.500 3.400-4 3M1046 335h-11v13h11M1071 341l-8 5 9 3-9 4 9 3-8 5" stroke="#4a8a5a" stroke-width="1.3" fill="none"/>
<path d="M2.5 571.5L959.0 282.0L1171.5 320.5L215.0 728.0Z" fill="#cc00cc" fill-opacity="0.5"/>
<path d="M2.5 571.5L215.0 728.0M39.9 560.2L256.8 710.2M76.0 549.3L296.7 693.2M110.8 538.7L334.8 677.0M144.3 528.6L371.2 661.4M176.7 518.8L406.1 646.6M207.9 509.3L439.6 632.3M238.1 500.2L471.6 618.7M267.3 491.3L502.4 605.6M295.6 482.8L532.0 593.0M323.0 474.5L560.4 580.9M349.4 466.5L587.7 569.2M375.1 458.7L614.1 558.0M400.0 451.2L639.4 547.2M424.1 443.9L663.9 536.8M447.6 436.8L687.5 526.7M470.3 429.9L710.3 517.0M492.4 423.2L732.3 507.6M513.8 416.7L753.6 498.6M534.7 410.4L774.1 489.8M555.0 404.3L794.0 481.3M574.7 398.3L813.3 473.1M593.9 392.5L832.0 465.1M612.6 386.8L850.1 457.4M630.8 381.3L867.6 450.0M648.5 376.0L884.6 442.7M665.8 370.7L901.2 435.7M682.7 365.6L917.2 428.8M699.1 360.7L932.8 422.2M715.1 355.8L947.9 415.8M730.8 351.1L962.6 409.5M746.0 346.5L976.9 403.4M760.9 342.0L990.9 397.5M775.5 337.5L1004.4 391.7M789.7 333.2L1017.6 386.1M803.6 329.0L1030.5 380.6M817.2 324.9L1043.0 375.2M830.4 320.9L1055.2 370.1M843.4 317.0L1067.1 365.0M856.1 313.1L1078.7 360.0M868.5 309.4L1090.0 355.2M880.7 305.7L1101.1 350.5M892.6 302.1L1111.8 345.9M904.2 298.6L1122.4 341.4M915.6 295.1L1132.7 337.0M926.8 291.7L1142.7 332.8M937.8 288.4L1152.5 328.6M948.5 285.2L1162.1 324.5M959.0 282.0L1171.5 320.5M2.5 571.5L959.0 282.0M22.6 586.3L977.4 285.3M44.7 602.5L1001.3 289.7M68.5 620.1L1026.2 294.2M94.0 638.9L1056.1 299.6M114.9 654.3L1077.5 303.5M134.5 668.7L1095.6 306.7M157.8 685.9L1114.2 310.1M185.2 706.1L1141.8 315.1M215.0 728.0L1171.5 320.5" stroke="#000" stroke-width="1.38" fill="none" stroke-linecap="square"/>
<path d="M65.4 705.8L85.6 698.9L93.0 732.9L73.7 740.8ZM61.4 716.6L84.6 707.8L98.4 722.0L78.2 730.9ZM94.4 737.3L114.2 729.4L122.0 755.6L100.9 764.5ZM88.0 739.3L110.2 730.4L127.0 746.2L105.8 755.0ZM80 705l6 2-4 4 7 3-5 4 8 3M82 716l5 1M109 722l6 3-5 4 8 3-6 4 9 2M117 726l8 4-6 3 9 4-7 3M127 727l5 4M678.4 574.5L687.3 578.4L687.9 600.2L678.8 596.3ZM670.0 589.6L687.9 581.2L696.3 585.1L679.5 593.5ZM776.6 614.7L786.7 618.6L787.2 642.0L776.6 637.6ZM768.3 630.9L786.1 621.4L795.6 625.8L778.3 634.6Z" stroke="#00ff00" stroke-width="1.3" fill="none" stroke-linejoin="round"/>
<g stroke="#00ffff" fill="none" stroke-linecap="butt">
<path d="M69.6 568.7L89.9 562.3L73.7 591.9L95.1 585" stroke-width="3.6" stroke-linejoin="miter"/>
<path d="M146.1 602.8L166 617.4M164.9 597.6L149.3 622.6" stroke-width="3.6"/>
<path d="M60.3 599.4L67.9 614.5M70.2 605.2L67.9 614.5L70.8 626.7" stroke-width="2.4"/>
<path d="M90.5 621.5L85.8 592.5M81.2 601.8L85.8 592.5L92.8 601.8M108.6 630L144 619.5M133.6 616L144 619.5L136.7 627.8M92.8 634.2L74.2 619.2M80 619.7L74.2 619.2L76.6 627.3" stroke-width="1.4"/>
</g>
<path d="M85.3 618.6L100.9 613.4L109 620.3L92.8 625Z" fill="#bdbdbd"/>
<path d="M92.8 625L109 620.3L109.6 629.6L94 636.6Z" fill="#00ffff"/>
<path d="M85.3 618.6L92.8 625L94 636.6L88.2 630.8Z" fill="#ffee00"/>
<rect x="1311.2" y="289.3" width="21.3" height="30.4" fill="#0000ff"/>
<rect x="1311.2" y="319.4" width="21.3" height="30.4" fill="#0055ff"/>
<rect x="1311.2" y="349.5" width="21.3" height="30.4" fill="#00a6ff"/>
<rect x="1311.2" y="379.6" width="21.3" height="30.4" fill="#00ffff"/>
<rect x="1311.2" y="409.7" width="21.3" height="30.4" fill="#00ee77"/>
<rect x="1311.2" y="439.8" width="21.3" height="30.4" fill="#00e600"/>
<rect x="1311.2" y="469.9" width="21.3" height="30.4" fill="#88ff00"/>
<rect x="1311.2" y="500.0" width="21.3" height="30.4" fill="#ffff00"/>
<rect x="1311.2" y="530.1" width="21.3" height="30.4" fill="#ffcc00"/>
<rect x="1311.2" y="560.2" width="21.3" height="30.4" fill="#ffa600"/>
<rect x="1311.2" y="590.3" width="21.3" height="30.4" fill="#ff8000"/>
<rect x="1311.2" y="620.4" width="21.3" height="30.4" fill="#ff4000"/>
<rect x="1311.2" y="650.5" width="21.3" height="30.4" fill="#ff0000"/>
<rect x="1311.2" y="680.6" width="21.3" height="30.4" fill="#e20066"/>
<rect x="1311.2" y="710.7" width="21.3" height="30.4" fill="#cc00cc"/>
<g font-family="Liberation Sans, sans-serif" font-size="16" fill="#000">
<text x="1321.5" y="282" text-anchor="middle">E-3</text>
<text x="1312.3" y="325.7" text-anchor="end">12.6</text>
<text x="1312.3" y="355.8" text-anchor="end">11.7</text>
<text x="1312.3" y="385.9" text-anchor="end">10.8</text>
<text x="1312.3" y="416.0" text-anchor="end">9.9</text>
<text x="1312.3" y="446.1" text-anchor="end">9.</text>
<text x="1312.3" y="476.2" text-anchor="end">8.1</text>
<text x="1312.3" y="506.3" text-anchor="end">7.2</text>
<text x="1312.3" y="536.4" text-anchor="end">6.3</text>
<text x="1312.3" y="566.5" text-anchor="end">5.4</text>
<text x="1312.3" y="596.6" text-anchor="end">4.5</text>
<text x="1312.3" y="626.7" text-anchor="end">3.6</text>
<text x="1312.3" y="656.8" text-anchor="end">2.7</text>
<text x="1312.3" y="686.9" text-anchor="end">1.8</text>
<text x="1312.3" y="717.0" text-anchor="end">0.9</text>
</g>
</svg>
<svg class="a" style="left:0;top:31px" width="1344" height="136" viewBox="0 31 1344 136">
<defs><linearGradient id="cg" x1="0" y1="0" x2="1" y2="1"><stop offset="0" stop-color="#9fd0f7"/><stop offset="1" stop-color="#ffffff"/></linearGradient><linearGradient id="sg" x1="0" y1="0" x2="0" y2="1"><stop offset="0" stop-color="#52606e"/><stop offset="1" stop-color="#1f2832"/></linearGradient><pattern id="cy" width="2" height="2" patternUnits="userSpaceOnUse"><rect width="1" height="1" fill="#00e0e0"/><rect x="1" y="1" width="1" height="1" fill="#00e0e0"/></pattern><radialGradient id="hg" cx="0.4" cy="0.3" r="0.8"><stop offset="0" stop-color="#8fb2ee"/><stop offset="0.6" stop-color="#3f6fd0"/><stop offset="1" stop-color="#27489a"/></radialGradient></defs>
<g transform="translate(19,35)"><rect x="0.500" y="0.500" width="13" height="12" rx=".8" fill="#3f76b8" stroke="#27466e"/><rect x="3" y="0.500" width="8.500" height="5.200" fill="#f4f7fa" stroke="#27466e" stroke-width=".5"/><path d="M4.200 2.200h1M6.200 2.200h4M4.200 4h1M6.200 4h4" stroke="#55606c" stroke-width=".8"/><rect x="3.500" y="8" width="7.500" height="4.500" fill="#cfdff0"/><rect x="5" y="9" width="1.800" height="3" fill="#3f76b8"/></g>
<path d="M47.200 42.600a4.700 4.700 0 1 1 6.600 3.400" fill="none" stroke="#5c6e7c" stroke-width="3.200"/><path d="M44 38.800l7 1.500-4.400 5.600z" fill="#5c6e7c"/><path d="M54.200 45.800l-2 2-1.200-2.400z" fill="#3a4854"/>
<path d="M80.800 42.600a4.700 4.700 0 1 0-6.600 3.400" fill="none" stroke="#5c6e7c" stroke-width="3.200"/><path d="M84 38.800l-7 1.500 4.400 5.600z" fill="#5c6e7c"/><path d="M73.800 45.800l2 2 1.200-2.400z" fill="#3a4854"/>
<g transform="translate(95,34)"><path d="M3.200 6.500v-2.300a3.400 3.400 0 0 1 6.800 0v2.300" fill="none" stroke="#1f2832" stroke-width="2"/><rect x="0.6" y="6.300" width="12" height="7.600" rx="1" fill="#5d6a78" stroke="#1f2832"/><rect x="2" y="7.600" width="9.200" height="5" fill="#9aa6b2"/><path d="M6.600 9v3" stroke="#1f2832" stroke-width="1.600"/></g>
<path d="M121 35.300l9.800 5.400-9.800 5.300z" fill="#2a323c" stroke="#111" stroke-width=".6"/><path d="M122.500 38l5 2.700-5 2.700z" fill="#6a7684"/>
<path d="M153 37.500h5" stroke="#5b84c4" stroke-width="1"/><path d="M153 39.500h5l-2.500 3z" fill="#5b84c4"/>
<path d="M1194 37.500h5.400" stroke="#5b84c4" stroke-width="1"/><path d="M1194 39.500h5.400l-2.700 3.200z" fill="#5b84c4"/>
<circle cx="1329.300" cy="65.500" r="10.200" fill="#e9eef6" stroke="#8a94a6" stroke-width="1.200"/><circle cx="1329.300" cy="65.500" r="8.300" fill="url(#hg)"/><text x="1329.300" y="70.300" text-anchor="middle" font-family="Liberation Sans, sans-serif" font-weight="bold" font-size="13.500" fill="#fff">?</text>
<path d="M18 95.200L29.200 90.600L50.200 93.200L39 99.500Z" fill="#8a969c"/><path d="M18.300 95.400L39 99.600L38.500 103.200L32.200 104L20 101.200Z" fill="#66737b"/><path d="M39 99.600L50.200 93.300L48.200 97.800L38.500 103.200Z" fill="#7a878e"/><path d="M21.500 97.600l7 1.500-.2 3-5.800-1.300zM30.500 99.300l6.500 1.300-.4 2.700-5.400.2z" fill="#aab6bc"/>
<path d="M38 106l9.800 9.600" stroke="#1a1a1a" stroke-width="2.400"/><path d="M38.500 106l8.500 8.400" stroke="#e8901a" stroke-width="1"/>
<path d="M37.500 99.500v12M31.500 105.500h12M33.300 101.300l8.400 8.400M41.700 101.300l-8.400 8.400" stroke="#f08a30" stroke-width=".9"/><circle cx="37.500" cy="105.500" r="2.600" fill="#ffd23a"/><circle cx="37.500" cy="105.500" r="1.200" fill="#fff6c0"/>
<g transform="translate(76.5,87)"><path d="M8.500 9.800l5 4.800" stroke="#000" stroke-width="2.400"/><path d="M9.500 10.600l4 3.900" stroke="#e8901a" stroke-width="1.100"/><circle cx="6.200" cy="6" r="5.100" fill="#fff" stroke="#000" stroke-width="1.400"/><path d="M2.600 4.200a4 4 0 0 1 2.600-2.200M9.900 7.900a4 4 0 0 1-2.700 2.100" stroke="#00e0e8" stroke-width="1.200" fill="none"/><rect x="3.800" y="3.600" width="4.800" height="4.800" fill="#fff" stroke="#000" stroke-width="1.100"/></g>
<g transform="translate(102.5,87)"><path d="M8.500 9.800l5 4.800" stroke="#000" stroke-width="2.400"/><path d="M9.500 10.600l4 3.900" stroke="#e8901a" stroke-width="1.100"/><circle cx="6.200" cy="6" r="5.100" fill="#fff" stroke="#000" stroke-width="1.400"/><path d="M2.600 4.200a4 4 0 0 1 2.600-2.200M9.900 7.900a4 4 0 0 1-2.700 2.100" stroke="#00e0e8" stroke-width="1.200" fill="none"/><circle cx="6.200" cy="6" r="3.100" fill="#000"/></g>
<g transform="translate(128.5,87)"><path d="M8.500 9.800l5 4.800" stroke="#b5b5b5" stroke-width="2.400"/><path d="M9.500 10.600l4 3.900" stroke="#bdbdbd" stroke-width="1.100"/><circle cx="6.200" cy="6" r="5.100" fill="#fff" stroke="#b5b5b5" stroke-width="1.400"/><path d="M9.200 6h-5.600M6 3.600l-2.600 2.400 2.600 2.400" stroke="#b5b5b5" stroke-width="1.100" fill="none"/></g>
<g transform="translate(154.5,87)"><path d="M8.500 9.800l5 4.800" stroke="#000" stroke-width="2.400"/><path d="M9.500 10.600l4 3.900" stroke="#e8901a" stroke-width="1.100"/><circle cx="6.200" cy="6" r="5.100" fill="#fff" stroke="#000" stroke-width="1.400"/><path d="M2.600 4.200a4 4 0 0 1 2.600-2.200M9.900 7.900a4 4 0 0 1-2.700 2.100" stroke="#00e0e8" stroke-width="1.200" fill="none"/><path d="M3.400 6h5.600M6.200 3.200v5.600" stroke="#000" stroke-width="1.500"/></g>
<g transform="translate(180.5,87)"><path d="M8.500 9.800l5 4.800" stroke="#000" stroke-width="2.400"/><path d="M9.500 10.600l4 3.900" stroke="#e8901a" stroke-width="1.100"/><circle cx="6.200" cy="6" r="5.100" fill="#fff" stroke="#000" stroke-width="1.400"/><path d="M2.600 4.200a4 4 0 0 1 2.600-2.200M9.900 7.900a4 4 0 0 1-2.700 2.100" stroke="#00e0e8" stroke-width="1.200" fill="none"/><path d="M3.400 6h5.600" stroke="#000" stroke-width="1.500"/></g>
<g transform="translate(206,87)"><path d="M0.600 3.500v-3h3M12.600 0.500h3v3M15.600 12.500v3h-3M3.600 15.500h-3v-3" fill="none" stroke="#1d1d1d" stroke-width="1.100"/><path d="M4 8.500l-.6-4.200c0-.8 1.100-.9 1.300-.1l.7 3 .2-5c0-.9 1.300-.9 1.400 0l.3 4.600.8-5c.1-.9 1.400-.7 1.300.1l-.4 5.100 1.300-3.900c.3-.8 1.400-.4 1.200.4l-1 4.800c.5-1 1.200-2 2-1.800.6.200.2 1-.4 2.100-1 2-2 4.600-4.200 4.900-2.200.3-3.300-1-3.600-2.500z" fill="#5f86ae" stroke="#35506e" stroke-width=".5"/></g>
<g transform="translate(76.500,107.500)"><path d="M7.600 0.600l6.600 3.200v7.800l-6.600 3.600-6.800-3.600v-7.800z" fill="#e6edf3" stroke="#7f95a8" stroke-width=".8"/><path d="M0.800 3.800l6.800 3.300 6.600-3.300M7.600 7.100v8" fill="none" stroke="#7f95a8" stroke-width=".8"/><path d="M0.800 3.900l6.800 3.300v8l-6.800-3.600z" fill="#6f93b4"/><path d="M14.200 3.900l-6.600 3.300v8l6.600-3.600z" fill="#8a9098"/><text x="2" y="12.300" font-family="Liberation Sans, sans-serif" font-weight="bold" font-size="6.500" fill="#fff">3</text><text x="9" y="12.300" font-family="Liberation Sans, sans-serif" font-weight="bold" font-size="6.500" fill="#fff">D</text></g>
<g transform="translate(180.500,108)"><circle cx="8" cy="8.300" r="3.600" fill="#4a5a6a"/><circle cx="7" cy="7.200" r="1.300" fill="#9fb0c0"/><path d="M3.400 2.600c-2.600 3-2.600 7.600 0 10.600M12.600 2.600c2.600 3 2.600 7.600 0 10.600" fill="none" stroke="#5a7186" stroke-width="1.700"/><path d="M2 1.500l2.800.3-1 2.600zM14 14.600l-2.800-.2 1-2.600z" fill="#5a7186"/></g>
<g transform="translate(206,108)"><path d="M1 6.500l2.600-4.600M15 6.500l-2.600-4.600" stroke="#2a3440" stroke-width="1" fill="none"/><rect x="0.800" y="6" width="6" height="4.400" rx=".8" fill="#dcebf9" stroke="#2a3440" stroke-width="1.100"/><rect x="9.200" y="6" width="6" height="4.400" rx=".8" fill="#dcebf9" stroke="#2a3440" stroke-width="1.100"/><path d="M6.800 7.800h2.400" stroke="#2a3440" stroke-width="1.100"/><path d="M2 9.800l3-3.200M10.400 9.800l3-3.200" stroke="#8fb9e3" stroke-width=".9"/></g>
<g transform="translate(76.500,129.500)"><path d="M1 14.800l1.200-3.800 9.600-9.400 2.600 2.600-9.600 9.400z" fill="#f0921e" stroke="#8a4a0a" stroke-width=".5"/><path d="M1 14.800l1.200-3.800 2.600 2.600z" fill="#3a2a1a"/><path d="M11.800 1.600l2.600 2.600-1.200 1.200-2.600-2.600z" fill="#e46a6a"/><path d="M10.600 2.800l2.600 2.600-.7.700-2.600-2.600z" fill="#3f7f3f"/></g>
<g transform="translate(102.500,129.500)"><rect x="0.600" y="0.600" width="5.800" height="4.800" fill="#d6e8fa" stroke="#5c6a78" stroke-width=".9"/><rect x="8.600" y="9.600" width="5.800" height="4.800" fill="#d6e8fa" stroke="#5c6a78" stroke-width=".9"/><path d="M7.400 8.400v2M7.400 14v1.200M15.400 8.400v2M15.400 14v1.200" stroke="#333" stroke-width=".8"/><path d="M11.500 1l3 3M14.600 1.600v2.600h-2.600M4.200 12.200l-3-3M1 11.800v-2.600h2.600" fill="none" stroke="#333" stroke-width="1"/></g>
<path d="M130.800 137.300l3.800 3.700 8.400-8.600" fill="none" stroke="#3f4c59" stroke-width="2.300"/>
<text x="154.600" y="141.300" font-family="Liberation Sans, sans-serif" font-weight="bold" font-size="9.500" fill="#3a4856" textLength="14.500" lengthAdjust="spacingAndGlyphs">xyz</text><path d="M154.800 132.700l2.200-2.600 2.200 2.600zM165.300 142.500l2.200 2.400 2.200-2.400z" fill="#3a4856"/>
<path d="M188.500 130.300l6.200 6.800h-3.500v6.600h-5.400v-6.600h-3.500z" fill="#c8c8c8" stroke="#a4a4a4" stroke-width=".8"/>
<path d="M214 143.700l6.200-6.800h-3.500v-6.600h-5.400v6.600h-3.500z" fill="#c8c8c8" stroke="#a4a4a4" stroke-width=".8"/>
<g transform="translate(238.500,89)"><path d="M0.800 13.300c3.600-5.400 8.400-7.600 13.700-7.600s10 2.200 13.500 7.600c-3.500 4.700-8.200 6.900-13.500 6.900s-10.100-2.200-13.700-6.900z" fill="#fff" stroke="#2a3440" stroke-width="1.600"/><circle cx="14.500" cy="12.800" r="5.400" fill="#2a3440"/><circle cx="14.500" cy="12.800" r="2.800" fill="#6e7f92"/><circle cx="15.800" cy="11.500" r="1.300" fill="#dfe8f0"/><path d="M14.300 0.500v3.400M7.600 1.600l1.500 3.200M21.200 1.600l-1.500 3.200M2 5l2.400 2.600M26.800 5l-2.400 2.600" stroke="#2a3440" stroke-width="1.500" fill="none"/></g>
<path d="M249 137.3h8l-4 3.800z" fill="#5b84c4"/>
<path d="M432 137.3h8l-4 3.800z" fill="#5b84c4"/>
<path d="M495 137.3h8l-4 3.800z" fill="#5b84c4"/>
<path d="M557 137.3h8l-4 3.800z" fill="#5b84c4"/>
<path d="M757 129h8l-4 3.800z" fill="#5b84c4"/>
<path d="M788.8 137.3h8l-4 3.800z" fill="#5b84c4"/>
<path d="M298.200 94.700h3.400M308 94.700h-1.400M304.800 88.200v3.600M304.800 97.600v3.600" stroke="#2a3440" stroke-width="1.200"/><path d="M303.600 93.500l2.400 2.400M306 93.500l-2.400 2.400" stroke="#1b9aaa" stroke-width="1"/><path d="M313.5 91.10000000000001v7.200l-4.600-3.600z" fill="#7f8c99" stroke="#3a4652" stroke-width=".8"/>
<path d="M325 94.400h5.600M330.800 88.200v12.800" stroke="#2a3440" stroke-width="1.400"/><path d="M339 90.60000000000001v7.200l-4.600-3.600z" fill="#7f8c99" stroke="#3a4652" stroke-width=".8"/>
<path d="M304.600 109.800v13.600" stroke="#2a3440" stroke-width="1" stroke-dasharray="1.200 1.200"/><path d="M303.300 109.300l2.600 2.600M305.900 109.300l-2.600 2.600M303.300 114.800l2.600 2.600M305.900 114.800l-2.600 2.600M303.300 120.600l2.600 2.600M305.900 120.600l-2.600 2.600" stroke="#1b9aaa" stroke-width=".9"/><path d="M313.5 112.0v7.200l-4.600-3.600z" fill="#7f8c99" stroke="#3a4652" stroke-width=".8"/>
<path d="M329.600 108.200v13.600" stroke="#2a3440" stroke-width="1.700"/><path d="M330.900 108.200v13.600" stroke="#9fd0f7" stroke-width=".9"/><path d="M339 111.60000000000001v7.200l-4.600-3.600z" fill="#7f8c99" stroke="#3a4652" stroke-width=".8"/>
<path d="M298.400 131.200l11.200 11.600M309.600 131.200l-11.200 11.600" stroke="#2a3440" stroke-width="1.100"/><rect x="302.400" y="135.400" width="3.400" height="3.400" fill="#cfe3f7" stroke="#2a3440" stroke-width=".9"/><path d="M313.5 133.20000000000002v7.200l-4.600-3.600z" fill="#7f8c99" stroke="#3a4652" stroke-width=".8"/>
<path d="M324.600 130.300h14M324.600 142h14M324.600 134.200h14M324.600 138.100h14" stroke="#111" stroke-width="1.500" stroke-dasharray="1.600 2.500"/><rect x="324.400" y="133.800" width="5.600" height="4.800" fill="#9cc8f5"/><path d="M339 132.70000000000002v7.200l-4.600-3.600z" fill="#7f8c99" stroke="#3a4652" stroke-width=".8"/>
<path transform="translate(391.3,87.6) scale(0.62)" d="M0 0v18.100l4-3.400 3.300 7.400 4.100-.6-2-7.400 3.500-1.100z" fill="#eaf5ee" stroke="#1f2d3a" stroke-width="2.10" stroke-linejoin="miter"/>
<path d="M388.600 110.200h12M388.600 114.400h12M388.600 118.600h12M388.600 122.800h12" stroke="#8f9aa6" stroke-width="1.500" stroke-dasharray="1.600 2.600"/><path d="M388.300 109.300l12.200 13.600" stroke="#2a3440" stroke-width="1.400"/><path d="M389.100 109l12.200 13.600" stroke="#9fd0f7" stroke-width=".8"/><path transform="translate(396.2,108.2) scale(0.5)" d="M0 0v18.100l4-3.400 3.300 7.400 4.100-.6-2-7.400 3.500-1.100z" fill="#2a3440" stroke="#2a3440" stroke-width="2.60" stroke-linejoin="miter"/>
<path d="M395 130.200l7 5-2.600 8.200h-8.800l-2.600-8.200z" fill="#7f8fa0"/><path d="M395.500 139.500h7" stroke="#2a3440" stroke-width="1.100"/>
<path transform="translate(428.3,87.5) scale(1.0)" d="M0 0v18.100l4-3.400 3.300 7.400 4.100-.6-2-7.400 3.500-1.100z" fill="url(#cg)" stroke="#1a3a5a" stroke-width="1.30" stroke-linejoin="miter"/>
<path transform="translate(488.4,87.5) scale(1.0)" d="M0 0v18.100l4-3.400 3.300 7.400 4.100-.6-2-7.400 3.500-1.100z" fill="url(#cg)" stroke="#1a3a5a" stroke-width="1.30" stroke-linejoin="miter"/>
<path d="M502.600 106.300c3.500 2.700 7 5.800 10.300 9.300M513 105.600c-4 2.400-7.300 5.700-10 9.900" stroke="#a01520" stroke-width="2" fill="none"/>
<path transform="translate(550.4,87.5) scale(1.0)" d="M0 0v18.100l4-3.400 3.300 7.400 4.100-.6-2-7.400 3.500-1.100z" fill="url(#cg)" stroke="#1a3a5a" stroke-width="1.30" stroke-linejoin="miter"/>
<path d="M565 109.400h10.800M570.400 104v10.800" stroke="#6aaa1a" stroke-width="2.800"/>
<circle cx="612.300" cy="95" r="5.300" fill="none" stroke="#4a5e78" stroke-width="2.600"/><path d="M607.600 92.600a5.300 5.300 0 0 1 7-2.600" stroke="#2a3440" stroke-width="2.600" fill="none"/>
<path d="M630.200 94.800h16l-1 2.300h-5l-1-1.500h-2l-1 1.500h-5z" fill="#3f4e5c"/><path d="M636 94.800l2.200-3.800 2.200 3.800z" fill="#7fa0b0"/>
<path d="M664.300 89.600l7 11.300h-14z" fill="#9fd0f7" stroke="#111" stroke-width="1.300"/><path d="M664.300 94l3.300 5.200h-6.600z" fill="#fff" stroke="#111" stroke-width=".8"/><path d="M657 101.200h14.600" stroke="#000" stroke-width="1.400"/>
<g transform="translate(682,87)"><path d="M0 0l16 16M4 0l12 12M8 0l8 8M12 0l4 4M0 4l12 12M0 8l8 8M0 12l4 4M16 0l-16 16M12 0l-12 12M8 0l-8 8M4 0l-4 4M16 4l-12 12M16 8l-8 8M16 12l-4 4" stroke="#23344a" stroke-width=".6"/><path d="M0.500 1.400h9" stroke="#13233a" stroke-width="2.400"/><ellipse cx="8.500" cy="11.300" rx="6.300" ry="4.300" fill="#1d3556"/><ellipse cx="8.500" cy="11.600" rx="3.600" ry="2.500" fill="#bcd9f2"/><circle cx="8.500" cy="11.800" r="1.300" fill="#13233a"/></g>
<path d="M604.600 120.500l5.400-7h11.600l-5.600 7z" fill="none" stroke="#1eb4f0" stroke-width="1.100"/><path d="M611.600 109v8.200M608.800 114.600l2.800 3 2.800-3" stroke="#111" stroke-width="1.300" fill="none"/>
<path d="M630.600 117.200h5l2.300-2.600 2.300 2.600h5.400v1.800h-5.400l-.8-.8h-3l-.8.800h-5z" fill="#fff" stroke="#b0b0b0" stroke-width=".8"/><path d="M640.300 112.300l1.700 1.700 3.200-4.400" stroke="#b0b0b0" stroke-width="1.400" fill="none"/>
<path d="M663.500 110.200l4.800 8.400h-9.600z" fill="#9fb8cc" stroke="#3a4a5a" stroke-width=".8"/><path d="M663.500 110.200v8.400M661.500 114.400h4" stroke="#3a4a5a" stroke-width=".6"/><circle cx="663.500" cy="109.600" r="1.300" fill="#3a4a5a"/><path d="M658 118.700h11" stroke="#12b4f0" stroke-width="1.200"/><path d="M663.500 119.500v4.400M661 121.700l2.500-2 2.500 2" stroke="#222" stroke-width="1.100" fill="none"/>
<path d="M690 109.400l5.400 2.600v7l-5.400 4-5.600-4v-7z" fill="#cfcfcf"/><path d="M684.400 112l5.600 2.800v8.200l-5.600-4z" fill="#bcbcbc"/><path d="M695.400 112l-5.400 2.800v8.200l5.400-4z" fill="#a9a9a9"/>
<g transform="translate(604.500,129.300)"><rect x="0.500" y="1.500" width="14.800" height="14" fill="#dce9f6" stroke="#4a5f78" stroke-width="1.100"/><path d="M0.500 5.500h14.800M0.500 9.300h14.800M0.500 13h14.800" stroke="#4a5f78" stroke-width="1.300"/><rect x="1" y="5.900" width="5" height="2.900" fill="#fff"/><rect x="1" y="9.800" width="5" height="2.700" fill="#fff"/><path d="M3.500 0v5M1.200 3l2.300 2.400 2.300-2.400" stroke="#2a3440" stroke-width="1.400" fill="none"/></g>
<path d="M630.500 139.500l10.500-9.200 5 2.200-10.200 10.300z" fill="#cfcfcf"/><path d="M630.500 139.500l5.300 3.300-.2 2-5.300-3.300z" fill="#b4b4b4"/><path d="M635.800 142.800l10.200-10.300v2l-10.400 10.300z" fill="#a6a6a6"/>
<path d="M656.600 132.400v9.600M672 132.400v9.600" stroke="#2a3a4a" stroke-width="1.300"/><path d="M656.600 132.600l3 4.400h9.400l3-4.400v0M656.600 137h3M669 137h3" stroke="#2a3a4a" stroke-width="1" fill="none"/><path d="M656.900 133l2.800 4h-2.800zM671.700 133l-2.800 4h2.800z" fill="#a9cdea"/><path d="M659.600 137h9.400l-2.400 4.600h-4.600z" fill="#a9cdea" stroke="#2a3a4a" stroke-width="1"/>
<path d="M686.400 133.400l6.300 6.800" stroke="#12b4f0" stroke-width="1.300"/><circle cx="686.400" cy="133.400" r="1.700" fill="#4a6a8a" stroke="#12b4f0" stroke-width=".8"/><circle cx="692.700" cy="140.200" r="1.700" fill="#4a6a8a" stroke="#12b4f0" stroke-width=".8"/><path d="M682.300 129.300l2.400 2.400M690.600 129.300l-2.400 2.400M688.300 144.400l2.400-2.400M697 144.400l-2.400-2.400" stroke="#222" stroke-width="1.100"/><path d="M683.600 131.900h1.300v-1.300M689.300 131.900h-1.300v-1.300M689.500 141.800h1.300v1.300M695.800 141.800h-1.300v1.300" stroke="#222" stroke-width=".9" fill="none"/>
<path d="M745 96.300l6.400-8.600v17.200z" fill="url(#cy)"/><path d="M719.500 89.800l3.200-4.600 4.600 5.400z" fill="#1f2832"/><rect x="721" y="90.800" width="20.200" height="12.200" rx="1.800" fill="url(#sg)"/><rect x="724.800" y="94.200" width="12.400" height="5.800" rx=".8" fill="#f4f6f8"/><circle cx="728.300" cy="97.200" r="1.700" fill="#2a3440"/><circle cx="733.600" cy="97.200" r="1.700" fill="#2a3440"/><path d="M726.500 97.300h9" stroke="#2a3440" stroke-width=".8"/><path d="M741.200 93.600l3.700-.6v7l-3.700-.6z" fill="#1f2832"/><rect x="726.800" y="103" width="9.200" height="2.700" fill="#1f2832"/>
<rect x="724.800" y="106.200" width="25.700" height="9.700" fill="#fff" stroke="#5a6470" stroke-width="1"/>
<path d="M803.400 97.900l5.800-7.700v14.700z" fill="url(#cy)"/><path d="M777.400 91.600l3-4.400 6.400 5.800-3.600 1z" fill="#5a6c80"/><rect x="779.800" y="93" width="19" height="10.800" rx="1.800" fill="url(#sg)"/><rect x="782.800" y="95.400" width="13" height="5.800" rx=".8" fill="#e8ebee"/><circle cx="786.500" cy="98.400" r="1.600" fill="#3a4450"/><circle cx="791.700" cy="98.400" r="1.600" fill="#3a4450"/><path d="M798.800 95.400l4.500-.8v7l-4.500-.8z" fill="#2a3440"/><path d="M786.800 104l-3.300 11.500M789.200 104v11.500M792.200 104l3.700 11.500" stroke="#6c7a88" stroke-width="1.800"/>
</svg>
<span class="t" style="left:31.0px;top:10.97px;font-size:11.5px;color:#000;font-weight:normal;transform:scaleX(0.9843)">CSiBridge v26.3.0 Advanced w/Rating 64-bit - Guide2  [CHANNEL PARTNER LICENSE - NOT FOR COMMERCIAL USE]</span>
<span class="t" style="left:19.3px;top:63.57px;font-size:11.5px;color:#fff;font-weight:normal;transform:scaleX(1.0091)">File</span>
<span class="t" style="left:82.3px;top:63.57px;font-size:11.5px;color:#2a5fc4;font-weight:normal;transform:scaleX(1.0330)">Home</span>
<span class="t" style="left:143.0px;top:63.57px;font-size:11.5px;color:#3e3e64;font-weight:normal;transform:scaleX(1.0425)">Layout</span>
<span class="t" style="left:209.6px;top:63.57px;font-size:11.5px;color:#3e3e64;font-weight:normal;transform:scaleX(1.0488)">Components</span>
<span class="t" style="left:306.8px;top:63.57px;font-size:11.5px;color:#3e3e64;font-weight:normal;transform:scaleX(0.9316)">Loads</span>
<span class="t" style="left:366.0px;top:63.57px;font-size:11.5px;color:#3e3e64;font-weight:normal;transform:scaleX(1.0346)">Bridge</span>
<span class="t" style="left:429.8px;top:63.57px;font-size:11.5px;color:#3e3e64;font-weight:normal;transform:scaleX(0.9737)">Analysis</span>
<span class="t" style="left:502.0px;top:63.57px;font-size:11.5px;color:#3e3e64;font-weight:normal;transform:scaleX(0.9773)">Design</span>
<span class="t" style="left:567.0px;top:63.57px;font-size:11.5px;color:#3e3e64;font-weight:normal;transform:scaleX(0.9925)">Rating</span>
<span class="t" style="left:629.0px;top:63.57px;font-size:11.5px;color:#3e3e64;font-weight:normal;transform:scaleX(1.0263)">Advanced</span>
<span class="t" style="left:1212.0px;top:33.77px;font-size:11.5px;color:#3e3e64;font-weight:normal;transform:scaleX(1.0316)">Francisco Tolentino</span>
<span class="t" style="left:16.6px;top:118.77px;font-size:11.5px;color:#3e3e64;font-weight:normal;transform:scaleX(1.0105)">Bridge</span>
<span class="t" style="left:15.4px;top:134.37px;font-size:11.5px;color:#3e3e64;font-weight:normal;transform:scaleX(0.9866)">Wizard</span>
<span class="t" style="left:16.0px;top:149.57px;font-size:11.5px;color:#5f648c;font-weight:normal;transform:scaleX(0.9838)">Wizard</span>
<span class="t" style="left:239.5px;top:120.77px;font-size:11.5px;color:#3e3e64;font-weight:normal;transform:scaleX(1.0495)">More</span>
<span class="t" style="left:163.8px;top:149.57px;font-size:11.5px;color:#5f648c;font-weight:normal;transform:scaleX(0.9406)">View</span>
<span class="t" style="left:305.2px;top:149.57px;font-size:11.5px;color:#5f648c;font-weight:normal;transform:scaleX(0.9419)">Snap</span>
<span class="t" style="left:363.0px;top:92.57px;font-size:7.6px;color:#1a1a1a;font-weight:bold;transform:scaleX(0.8940)">ALL</span>
<span class="t" style="left:364.0px;top:113.57px;font-size:7.6px;color:#1a1a1a;font-weight:bold;transform:scaleX(0.9861)">PS</span>
<span class="t" style="left:362.0px;top:134.57px;font-size:7.6px;color:#b4b4b4;font-weight:bold;transform:scaleX(0.9097)">CLR</span>
<span class="t" style="left:420.5px;top:120.77px;font-size:11.5px;color:#3e3e64;font-weight:normal;transform:scaleX(0.9541)">Select</span>
<span class="t" style="left:477.5px;top:120.77px;font-size:11.5px;color:#3e3e64;font-weight:normal;transform:scaleX(0.9721)">Deselect</span>
<span class="t" style="left:546.8px;top:120.77px;font-size:11.5px;color:#3e3e64;font-weight:normal;transform:scaleX(1.0304)">More</span>
<span class="t" style="left:456.5px;top:149.57px;font-size:11.5px;color:#5f648c;font-weight:normal;transform:scaleX(0.9541)">Select</span>
<span class="t" style="left:715.5px;top:118.97px;font-size:11.5px;color:#3e3e64;font-weight:normal;transform:scaleX(0.9979)">Named</span>
<span class="t" style="left:715.5px;top:134.47px;font-size:11.5px;color:#3e3e64;font-weight:normal;transform:scaleX(0.9809)">Display</span>
<span class="t" style="left:778.8px;top:120.77px;font-size:11.5px;color:#3e3e64;font-weight:normal;transform:scaleX(1.0495)">More</span>
<span class="t" style="left:690.8px;top:149.57px;font-size:11.5px;color:#5f648c;font-weight:normal;transform:scaleX(0.9743)">Display</span>
<span class="t" style="left:727.0px;top:107.28px;font-size:9px;color:#222;font-weight:normal;transform:scaleX(0.9993)">name</span>
<span class="t" style="left:27.0px;top:176.77px;font-size:11.5px;color:#000;font-weight:normal;transform:scaleX(1.0163)">Deformed Shape (Construction-1) - Step 3; Add_Slab - 1</span>
<span class="t" style="left:18.0px;top:845.77px;font-size:11.5px;color:#000;font-weight:normal;transform:scaleX(1.0354)">MIN=0., MAX=0.013, Right Click on any joint for displacement values</span>
<span class="t" style="left:980.3px;top:845.57px;font-size:11.5px;color:#000;font-weight:normal;transform:scaleX(1.0541)">Start Animation</span>
<span class="t" style="left:1162.6px;top:845.57px;font-size:11.5px;color:#000;font-weight:normal;transform:scaleX(0.9124)">GLOBAL</span>
<span class="t" style="left:1262.4px;top:845.57px;font-size:11.5px;color:#000;font-weight:normal;transform:scaleX(0.9991)">KN, m, C</span>
<span class="t" style="left:103.0px;top:112.23px;font-size:10px;color:#3a4a5a;font-weight:bold;transform:scaleX(1.0117)">XY</span>
<span class="t" style="left:129.0px;top:112.23px;font-size:10px;color:#3a4a5a;font-weight:bold;transform:scaleX(1.0562)">XZ</span>
<span class="t" style="left:155.0px;top:112.23px;font-size:10px;color:#3a4a5a;font-weight:bold;transform:scaleX(1.0562)">YZ</span>
</body></html>
